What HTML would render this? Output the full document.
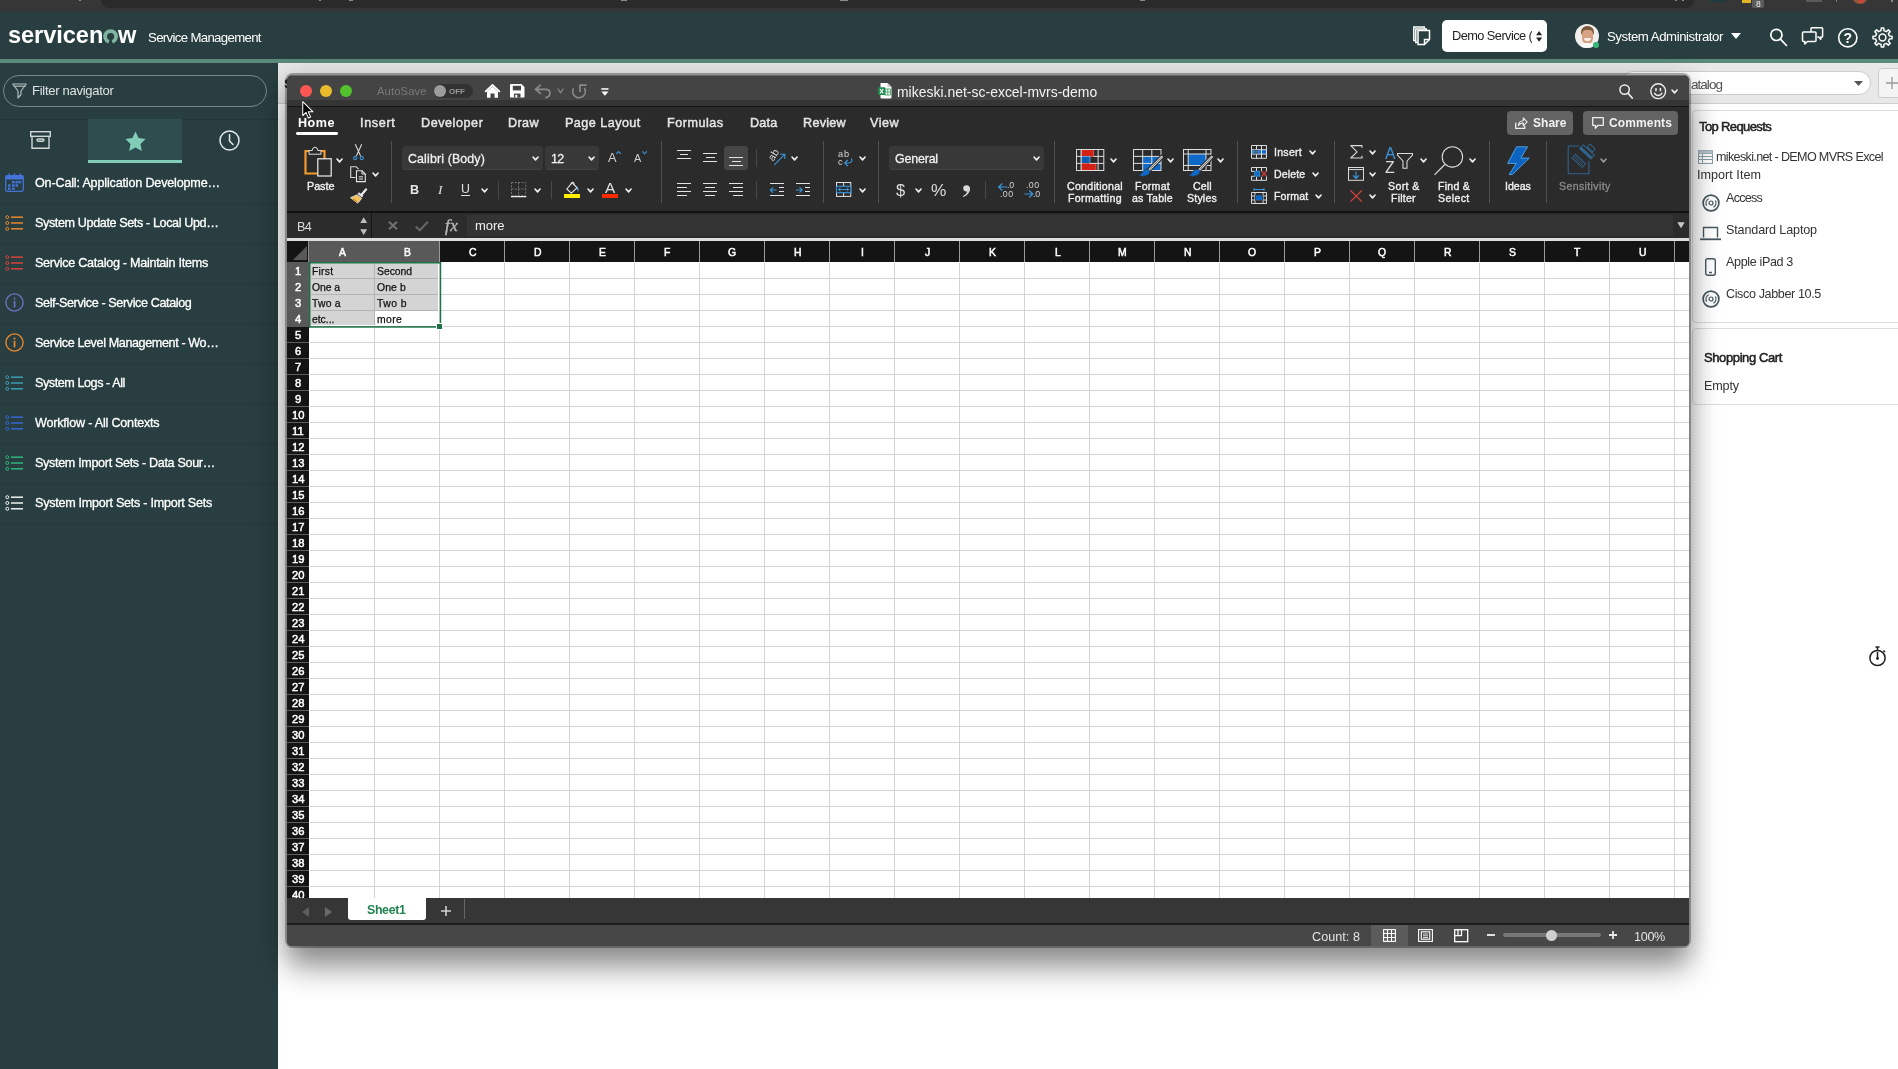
<!DOCTYPE html>
<html><head><meta charset="utf-8"><title>ServiceNow</title>
<style>
html,body{margin:0;padding:0;}
body{width:1898px;height:1069px;overflow:hidden;position:relative;background:#fff;font-family:"Liberation Sans",sans-serif;}
.a{position:absolute;box-sizing:border-box;}
.t{position:absolute;white-space:nowrap;font-family:"Liberation Sans",sans-serif;}
svg{overflow:visible;}
text{font-family:"Liberation Sans",sans-serif;white-space:pre;}
</style></head><body><div id="pg" style="position:absolute;left:0;top:0;width:1898px;height:1069px;will-change:transform;">
<div class="a" style="left:0px;top:0px;width:1898px;height:12.3px;background:#363636;"></div>
<div class="a" style="left:101px;top:-8px;width:1593px;height:16px;background:#2a2a2a;border-radius:8px;"></div>
<div class="a" style="left:79px;top:0px;width:2px;height:1px;background:#8a8a8a;"></div>
<div class="a" style="left:319px;top:0px;width:1.5px;height:1px;background:#8a8a8a;"></div>
<div class="a" style="left:349px;top:0px;width:4px;height:1px;background:#8a8a8a;"></div>
<div class="a" style="left:621px;top:0px;width:6px;height:1px;background:#8a8a8a;"></div>
<div class="a" style="left:840px;top:0px;width:8px;height:1px;background:#8a8a8a;"></div>
<div class="a" style="left:1140px;top:0px;width:5px;height:1px;background:#8a8a8a;"></div>
<div class="a" style="left:1675px;top:0px;width:2px;height:1px;background:#8a8a8a;"></div>
<div class="a" style="left:1682px;top:0px;width:2px;height:1px;background:#8a8a8a;"></div>
<div class="a" style="left:1710px;top:0px;width:16px;height:2px;background:#1d3a40;"></div>
<div class="a" style="left:1742px;top:0px;width:9px;height:2.6px;background:#e6b422;"></div>
<div class="a" style="left:1752px;top:-2px;width:12px;height:9.6px;background:#5c5c5c;border-radius:2px;"></div>
<svg class="a tx" style="left:1755.64px;top:6.60px;" width="1" height="1"><text style="font-size:8.5px;fill:#f0f0f0;">8</text></svg>
<div class="a" style="left:1806px;top:0px;width:16px;height:1.5px;background:#5a5a5a;"></div>
<div class="a" style="left:1836px;top:0px;width:1px;height:2px;background:#777;"></div>
<div class="a" style="left:1852px;top:-12px;width:16px;height:16px;background:#8a5a3a;border-radius:50%;"></div>
<div class="a" style="left:1858px;top:0px;width:6px;height:3px;background:#c9463a;"></div>
<div class="a" style="left:1891px;top:0px;width:2px;height:1.5px;background:#888;"></div>
<div class="a" style="left:0px;top:12px;width:1898px;height:47px;background:#293e40;"></div>
<div class="a" style="left:0px;top:59px;width:1898px;height:4px;background:#5a8a7a;"></div>
<svg class="a tx" style="left:8.00px;top:42.70px;" width="1" height="1"><text style="font-size:23.6px;fill:#fff;letter-spacing:-0.060px;font-weight:bold;">servicen</text></svg>
<svg class="a tx" style="left:118.30px;top:42.70px;" width="1" height="1"><text style="font-size:23.6px;fill:#fff;font-weight:bold;">w</text></svg>
<svg class="a" style="left:103px;top:28.7px;" width="15.2" height="15.2" viewBox="0 0 15.2 15.2"><circle cx="7.600" cy="7.600" r="5.500" fill="none" stroke="#81b5a1" stroke-width="3.800"/><path d="M5.200 15.200l1.300-4.300h2.200l1.300 4.300z" fill="#293e40"/></svg>
<svg class="a tx" style="left:148.00px;top:42.40px;" width="1" height="1"><text style="font-size:13.2px;fill:#fff;letter-spacing:-0.652px;">Service Management</text></svg>
<svg class="a" style="left:1412px;top:25px;" width="19" height="21" viewBox="0 0 19 21"><g fill="none" stroke="#fff" stroke-width="1.5"><path d="M3.5 15.5h-1.7v-13.5h10.5v1.5"/><path d="M5.5 17.5h-1.7v-13.5h10.5v1.5"/><path d="M6 5.5h11.5v9l-5 5h-6.5z" fill="#293e40"/><path d="M17.5 14.5h-5v5" /></g></svg>
<div class="a" style="left:1442px;top:20px;width:105px;height:32px;background:#fff;border-radius:5px;"></div>
<svg class="a tx" style="left:1451.60px;top:40.10px;" width="1" height="1"><text style="font-size:12.8px;fill:#222;letter-spacing:-0.564px;">Demo Service (</text></svg>
<div class="a" style="left:1532.2px;top:24px;width:12px;height:24px;background:#fff;"></div>
<svg class="a" style="left:1536px;top:30.6px;" width="6.2" height="11" viewBox="0 0 6.2 11"><path d="M3.100 0l3 4.300h-6zM3.100 10.800l3-4.300h-6z" fill="#222"/></svg>
<div class="a" style="left:1575px;top:24px;width:24px;height:24px;background:#f2f0ee;border-radius:50%;overflow:hidden;"><div class="a" style="left:6px;top:2px;width:13px;height:9px;background:#7a5a3c;border-radius:6px 6px 2px 2px"></div><div class="a" style="left:7px;top:5.500px;width:11px;height:14px;background:#d6a283;border-radius:4px 4px 5.500px 5.500px"></div><div class="a" style="left:9px;top:14px;width:7px;height:2.500px;background:#f7efe9;border-radius:0 0 3px 3px"></div><div class="a" style="left:1px;top:19px;width:22px;height:10px;background:#fafafa;border-radius:9px 9px 0 0"></div></div>
<div class="a" style="left:1593px;top:42.2px;width:5.8px;height:5.8px;background:#35b577;border-radius:50%;"></div>
<svg class="a tx" style="left:1607.30px;top:40.50px;" width="1" height="1"><text style="font-size:13.2px;fill:#fff;letter-spacing:-0.435px;">System Administrator</text></svg>
<svg class="a" style="left:1731px;top:33px;" width="10" height="6" viewBox="0 0 10 6"><path d="M0 0h10l-5 6z" fill="#fff"/></svg>
<svg class="a" style="left:1769px;top:28px;" width="19" height="19" viewBox="0 0 19 19"><g fill="none" stroke="#fff" stroke-width="1.7"><circle cx="7.400" cy="6.900" r="5.600"/><path d="M11.400 11.200l6.100 6.300" stroke-linecap="round"/></g></svg>
<svg class="a" style="left:1802px;top:26.5px;" width="22" height="18" viewBox="0 0 22 18"><g fill="none" stroke="#fff" stroke-width="1.500" stroke-linejoin="round"><path d="M9 4.800v-3.200q0-0.800 0.800-0.800h10q0.800 0 0.800 0.800v7.600q0 0.800-0.800 0.800h-1v2.300l-2.300-2.300h-1.200"/><path d="M1.500 5.100h11.500q1 0 1 1v7.400q0 1-1 1h-7.500l-2.700 2.500v-2.500h-1.300q-1 0-1-1v-7.400q0-1 1-1z"/></g></svg>
<svg class="a" style="left:1836.5px;top:26.7px;" width="22" height="22" viewBox="0 0 22 22"><circle cx="10.800" cy="10.800" r="9.100" fill="none" stroke="#fff" stroke-width="1.600"/><text x="10.800" y="15.800" style="font-size:14px;font-weight:bold;fill:#fff;" text-anchor="middle">?</text></svg>
<svg class="a" style="left:1871px;top:26px;" width="23" height="23" viewBox="0 0 23 23"><g transform="translate(11.5 11.5)" fill="none" stroke="#fff" stroke-width="1.5" stroke-linejoin="round"><path d="M-1.46 -6.85 L-1.24 -9.52 L1.24 -9.52 L1.46 -6.85 L3.81 -5.87 L5.85 -7.61 L7.61 -5.85 L5.87 -3.81 L6.85 -1.46 L9.52 -1.24 L9.52 1.24 L6.85 1.46 L5.87 3.81 L7.61 5.85 L5.85 7.61 L3.81 5.87 L1.46 6.85 L1.24 9.52 L-1.24 9.52 L-1.46 6.85 L-3.81 5.87 L-5.85 7.61 L-7.61 5.85 L-5.87 3.81 L-6.85 1.46 L-9.52 1.24 L-9.52 -1.24 L-6.85 -1.46 L-5.87 -3.81 L-7.61 -5.85 L-5.85 -7.61 L-3.81 -5.87Z"/><circle r="3.4"/></g></svg>
<div class="a" style="left:0px;top:63px;width:278px;height:1006px;background:#293e40;"></div>
<div class="a" style="left:3px;top:75px;width:264px;height:32px;border:1px solid #728a8b;border-radius:16px;"></div>
<svg class="a" style="left:12px;top:83px;" width="15" height="16" viewBox="0 0 15 16"><g fill="none" stroke="#aebbb9" stroke-width="1.2"><path d="M0.8 1h13.4l-5.2 7v3.5l-3 3.5v-7z" stroke-linejoin="round"/><path d="M1.5 3.2h12"/></g></svg>
<svg class="a tx" style="left:32.40px;top:95.30px;" width="1" height="1"><text style="font-size:13px;fill:#dde4e3;letter-spacing:-0.280px;">Filter navigator</text></svg>
<div class="a" style="left:0px;top:119px;width:278px;height:1px;background:#243739;"></div>
<div class="a" style="left:88px;top:119px;width:94px;height:44px;background:#2f4d4f;"></div>
<div class="a" style="left:88px;top:160px;width:94px;height:3px;background:#81cdb8;"></div>
<svg class="a" style="left:30px;top:131px;" width="21" height="18" viewBox="0 0 21 18"><g fill="none" stroke="#cfd8d7" stroke-width="1.4"><rect x="0.7" y="0.7" width="19.6" height="4.6"/><path d="M2 5.3v12h17v-12"/><rect x="7" y="8" width="7" height="2.2" rx="1.1"/></g></svg>
<svg class="a" style="left:124.5px;top:130.5px;" width="21" height="20" viewBox="0 0 21 20"><path d="M10.5 0.5l3.1 6.6 7 .9-5.1 5 1.3 7.1-6.3-3.5-6.3 3.5 1.3-7.1-5.1-5 7-.9z" fill="#81cdb8"/></svg>
<svg class="a" style="left:219px;top:130px;" width="21" height="21" viewBox="0 0 21 21"><g fill="none" stroke="#e4eae9" stroke-width="1.5"><circle cx="10.5" cy="10.5" r="9.5"/><path d="M10.5 4.5v6.5l3.5 3.5" stroke-linecap="round"/></g></svg>
<div class="a" style="left:0px;top:202.5px;width:278px;height:1px;background:rgba(0,0,0,0.10);"></div>
<svg class="a tx" style="left:35.00px;top:187.10px;" width="1" height="1"><text style="font-size:12.6px;fill:#fff;letter-spacing:-0.177px;stroke:#fff;stroke-width:0.3px;">On-Call: Application Developme…</text></svg>
<svg class="a" style="left:4.5px;top:172.5px;" width="19" height="19" viewBox="0 0 19 19"><rect x="0.7" y="2.7" width="17.6" height="15.6" rx="1.5" fill="none" stroke="#4372d8" stroke-width="1.3"/><rect x="1" y="3" width="17" height="3.5" fill="#4372d8"/><rect x="3.3" y="0.3" width="1.4" height="4" fill="#4372d8"/><rect x="8.8" y="0.3" width="1.4" height="4" fill="#4372d8"/><rect x="14.3" y="0.3" width="1.4" height="4" fill="#4372d8"/><rect x="7" y="8" width="2.6" height="2.4" fill="#4372d8"/><rect x="10.5" y="8" width="2.6" height="2.4" fill="#4372d8"/><rect x="13.5" y="8" width="2.6" height="2.4" fill="#4372d8"/><rect x="3" y="11.3" width="2.6" height="2.4" fill="#4372d8"/><rect x="7" y="11.3" width="2.6" height="2.4" fill="#4372d8"/><rect x="10.5" y="11.3" width="2.6" height="2.4" fill="#4372d8"/><rect x="3" y="14.5" width="2.6" height="2.4" fill="#4372d8"/><rect x="7" y="14.5" width="2.6" height="2.4" fill="#4372d8"/></svg>
<div class="a" style="left:0px;top:242.5px;width:278px;height:1px;background:rgba(0,0,0,0.10);"></div>
<svg class="a tx" style="left:35.00px;top:227.10px;" width="1" height="1"><text style="font-size:12.6px;fill:#fff;letter-spacing:-0.383px;stroke:#fff;stroke-width:0.3px;">System Update Sets - Local Upd…</text></svg>
<svg class="a" style="left:4.5px;top:214.5px;" width="19" height="16" viewBox="0 0 19 16"><circle cx="2.3" cy="2.2" r="1.5" fill="none" stroke="#e8852c" stroke-width="1"/><path d="M6 2.2h12" stroke="#e8852c" stroke-width="1.5"/><circle cx="2.3" cy="8" r="1.5" fill="none" stroke="#e8852c" stroke-width="1"/><path d="M6 8h12" stroke="#e8852c" stroke-width="1.5"/><circle cx="2.3" cy="13.8" r="1.5" fill="none" stroke="#e8852c" stroke-width="1"/><path d="M6 13.8h12" stroke="#e8852c" stroke-width="1.5"/></svg>
<div class="a" style="left:0px;top:282.5px;width:278px;height:1px;background:rgba(0,0,0,0.10);"></div>
<svg class="a tx" style="left:35.00px;top:267.10px;" width="1" height="1"><text style="font-size:12.6px;fill:#fff;letter-spacing:-0.284px;stroke:#fff;stroke-width:0.3px;">Service Catalog - Maintain Items</text></svg>
<svg class="a" style="left:4.5px;top:254.5px;" width="19" height="16" viewBox="0 0 19 16"><circle cx="2.3" cy="2.2" r="1.5" fill="none" stroke="#d9423a" stroke-width="1"/><path d="M6 2.2h12" stroke="#d9423a" stroke-width="1.5"/><circle cx="2.3" cy="8" r="1.5" fill="none" stroke="#d9423a" stroke-width="1"/><path d="M6 8h12" stroke="#d9423a" stroke-width="1.5"/><circle cx="2.3" cy="13.8" r="1.5" fill="none" stroke="#d9423a" stroke-width="1"/><path d="M6 13.8h12" stroke="#d9423a" stroke-width="1.5"/></svg>
<div class="a" style="left:0px;top:322.5px;width:278px;height:1px;background:rgba(0,0,0,0.10);"></div>
<svg class="a tx" style="left:35.00px;top:307.10px;" width="1" height="1"><text style="font-size:12.6px;fill:#fff;letter-spacing:-0.385px;stroke:#fff;stroke-width:0.3px;">Self-Service - Service Catalog</text></svg>
<svg class="a" style="left:4.5px;top:293px;" width="19" height="19" viewBox="0 0 19 19"><circle cx="9.5" cy="9.5" r="8.6" fill="none" stroke="#7272c4" stroke-width="1.3"/><rect x="8.7" y="7.8" width="1.7" height="6.6" fill="#7272c4"/><rect x="8.7" y="4.6" width="1.7" height="1.8" fill="#7272c4"/></svg>
<div class="a" style="left:0px;top:362.5px;width:278px;height:1px;background:rgba(0,0,0,0.10);"></div>
<svg class="a tx" style="left:35.00px;top:347.10px;" width="1" height="1"><text style="font-size:12.6px;fill:#fff;letter-spacing:-0.388px;stroke:#fff;stroke-width:0.3px;">Service Level Management - Wo…</text></svg>
<svg class="a" style="left:4.5px;top:333px;" width="19" height="19" viewBox="0 0 19 19"><circle cx="9.5" cy="9.5" r="8.6" fill="none" stroke="#f08a2a" stroke-width="1.3"/><rect x="8.7" y="7.8" width="1.7" height="6.6" fill="#f08a2a"/><rect x="8.7" y="4.6" width="1.7" height="1.8" fill="#f08a2a"/></svg>
<div class="a" style="left:0px;top:402.5px;width:278px;height:1px;background:rgba(0,0,0,0.10);"></div>
<svg class="a tx" style="left:35.00px;top:387.10px;" width="1" height="1"><text style="font-size:12.6px;fill:#fff;letter-spacing:-0.432px;stroke:#fff;stroke-width:0.3px;">System Logs - All</text></svg>
<svg class="a" style="left:4.5px;top:374.5px;" width="19" height="16" viewBox="0 0 19 16"><circle cx="2.3" cy="2.2" r="1.5" fill="none" stroke="#3d9db5" stroke-width="1"/><path d="M6 2.2h12" stroke="#3d9db5" stroke-width="1.5"/><circle cx="2.3" cy="8" r="1.5" fill="none" stroke="#3d9db5" stroke-width="1"/><path d="M6 8h12" stroke="#3d9db5" stroke-width="1.5"/><circle cx="2.3" cy="13.8" r="1.5" fill="none" stroke="#3d9db5" stroke-width="1"/><path d="M6 13.8h12" stroke="#3d9db5" stroke-width="1.5"/></svg>
<div class="a" style="left:0px;top:442.5px;width:278px;height:1px;background:rgba(0,0,0,0.10);"></div>
<svg class="a tx" style="left:35.00px;top:427.10px;" width="1" height="1"><text style="font-size:12.6px;fill:#fff;letter-spacing:-0.209px;stroke:#fff;stroke-width:0.3px;">Workflow - All Contexts</text></svg>
<svg class="a" style="left:4.5px;top:414.5px;" width="19" height="16" viewBox="0 0 19 16"><circle cx="2.3" cy="2.2" r="1.5" fill="none" stroke="#3767d6" stroke-width="1"/><path d="M6 2.2h12" stroke="#3767d6" stroke-width="1.5"/><circle cx="2.3" cy="8" r="1.5" fill="none" stroke="#3767d6" stroke-width="1"/><path d="M6 8h12" stroke="#3767d6" stroke-width="1.5"/><circle cx="2.3" cy="13.8" r="1.5" fill="none" stroke="#3767d6" stroke-width="1"/><path d="M6 13.8h12" stroke="#3767d6" stroke-width="1.5"/></svg>
<div class="a" style="left:0px;top:482.5px;width:278px;height:1px;background:rgba(0,0,0,0.10);"></div>
<svg class="a tx" style="left:35.00px;top:467.10px;" width="1" height="1"><text style="font-size:12.6px;fill:#fff;letter-spacing:-0.337px;stroke:#fff;stroke-width:0.3px;">System Import Sets - Data Sour…</text></svg>
<svg class="a" style="left:4.5px;top:454.5px;" width="19" height="16" viewBox="0 0 19 16"><circle cx="2.3" cy="2.2" r="1.5" fill="none" stroke="#2db77b" stroke-width="1"/><path d="M6 2.2h12" stroke="#2db77b" stroke-width="1.5"/><circle cx="2.3" cy="8" r="1.5" fill="none" stroke="#2db77b" stroke-width="1"/><path d="M6 8h12" stroke="#2db77b" stroke-width="1.5"/><circle cx="2.3" cy="13.8" r="1.5" fill="none" stroke="#2db77b" stroke-width="1"/><path d="M6 13.8h12" stroke="#2db77b" stroke-width="1.5"/></svg>
<div class="a" style="left:0px;top:522.5px;width:278px;height:1px;background:rgba(0,0,0,0.10);"></div>
<svg class="a tx" style="left:35.00px;top:507.10px;" width="1" height="1"><text style="font-size:12.6px;fill:#fff;letter-spacing:-0.267px;stroke:#fff;stroke-width:0.3px;">System Import Sets - Import Sets</text></svg>
<svg class="a" style="left:4.5px;top:494.5px;" width="19" height="16" viewBox="0 0 19 16"><circle cx="2.3" cy="2.2" r="1.5" fill="none" stroke="#f2f2f2" stroke-width="1"/><path d="M6 2.2h12" stroke="#f2f2f2" stroke-width="1.5"/><circle cx="2.3" cy="8" r="1.5" fill="none" stroke="#f2f2f2" stroke-width="1"/><path d="M6 8h12" stroke="#f2f2f2" stroke-width="1.5"/><circle cx="2.3" cy="13.8" r="1.5" fill="none" stroke="#f2f2f2" stroke-width="1"/><path d="M6 13.8h12" stroke="#f2f2f2" stroke-width="1.5"/></svg>
<div class="a" style="left:278px;top:63px;width:1620px;height:41px;background:#e8e8e8;"></div>
<div class="a" style="left:278px;top:103px;width:1620px;height:1px;background:#cfcfcf;"></div>
<div class="a" style="left:1621px;top:71px;width:250px;height:24px;background:#fff;border:1px solid #ccc;border-radius:12px;"></div>
<svg class="a tx" style="left:1691.00px;top:88.50px;" width="1" height="1"><text style="font-size:13.5px;fill:#555;letter-spacing:-0.964px;">atalog</text></svg>
<svg class="a" style="left:1854px;top:81px;" width="9" height="5" viewBox="0 0 9 5"><path d="M0 0h9l-4.5 5z" fill="#555"/></svg>
<div class="a" style="left:1878px;top:68px;width:30px;height:30px;background:#f4f4f4;border:1px solid #ccc;border-radius:4px;"></div>
<svg class="a" style="left:1886px;top:77px;" width="12" height="12" viewBox="0 0 12 12"><path d="M6 0v12M0 6h12" stroke="#999" stroke-width="1.3"/></svg>
<div class="a" style="left:1692px;top:110px;width:220px;height:213px;background:#fff;border:1px solid #ddd;border-radius:4px;"></div>
<svg class="a tx" style="left:1699.00px;top:131.00px;" width="1" height="1"><text style="font-size:13px;fill:#222;letter-spacing:-0.624px;stroke:#222;stroke-width:0.5px;">Top Requests</text></svg>
<svg class="a" style="left:1698px;top:150px;" width="15" height="14" viewBox="0 0 15 14"><g fill="none" stroke="#8aa0a8" stroke-width="1"><rect x="0.5" y="0.5" width="14" height="13"/><path d="M0.5 3.5h14M0.5 6.5h14M0.5 9.5h14M4.5 3.5v10"/></g><rect x="0.5" y="0.5" width="14" height="3" fill="#b7c6cc"/></svg>
<svg class="a tx" style="left:1716.00px;top:161.30px;" width="1" height="1"><text style="font-size:12.6px;fill:#333;letter-spacing:-0.663px;">mikeski.net - DEMO MVRS Excel</text></svg>
<svg class="a tx" style="left:1697.00px;top:179.00px;" width="1" height="1"><text style="font-size:12.6px;fill:#333;letter-spacing:0.026px;">Import Item</text></svg>
<svg class="a" style="left:1701.5px;top:194px;" width="18" height="18" viewBox="0 0 18 18"><g fill="none" stroke="#46585e"><circle cx="9" cy="9" r="7.9" stroke-width="1.7"/><circle cx="9" cy="9" r="2" stroke-width="1.2"/><path d="M4.6 11.5a5 5 0 0 1 2-6.7M13.4 6.5a5 5 0 0 1-2 6.7" stroke-width="1.3"/></g></svg>
<svg class="a tx" style="left:1726.00px;top:202.00px;" width="1" height="1"><text style="font-size:12.6px;fill:#333;letter-spacing:-0.769px;">Access</text></svg>
<svg class="a" style="left:1700px;top:224px;" width="21" height="18" viewBox="0 0 21 18"><g fill="none" stroke="#46585e" stroke-width="1.4"><path d="M3.5 13.5v-10h14v10"/><path d="M0 15.3h21" stroke-width="1.8"/></g></svg>
<svg class="a tx" style="left:1726.00px;top:234.00px;" width="1" height="1"><text style="font-size:12.6px;fill:#333;letter-spacing:-0.145px;">Standard Laptop</text></svg>
<svg class="a" style="left:1704.5px;top:258px;" width="11" height="18" viewBox="0 0 11 18"><g fill="none" stroke="#46585e" stroke-width="1.4"><rect x="0.7" y="0.7" width="9.6" height="16.6" rx="2"/><path d="M4 14.5h3"/></g></svg>
<svg class="a tx" style="left:1726.00px;top:266.00px;" width="1" height="1"><text style="font-size:12.6px;fill:#333;letter-spacing:-0.371px;">Apple iPad 3</text></svg>
<svg class="a" style="left:1701.5px;top:290px;" width="18" height="18" viewBox="0 0 18 18"><g fill="none" stroke="#46585e"><circle cx="9" cy="9" r="7.9" stroke-width="1.7"/><circle cx="9" cy="9" r="2" stroke-width="1.2"/><path d="M4.6 11.5a5 5 0 0 1 2-6.7M13.4 6.5a5 5 0 0 1-2 6.7" stroke-width="1.3"/></g></svg>
<svg class="a tx" style="left:1726.00px;top:298.00px;" width="1" height="1"><text style="font-size:12.6px;fill:#333;letter-spacing:-0.386px;">Cisco Jabber 10.5</text></svg>
<div class="a" style="left:1692px;top:328px;width:220px;height:77px;background:#fff;border:1px solid #ddd;border-radius:4px;"></div>
<svg class="a tx" style="left:1704.00px;top:362.00px;" width="1" height="1"><text style="font-size:13px;fill:#222;letter-spacing:-0.393px;stroke:#222;stroke-width:0.5px;">Shopping Cart</text></svg>
<svg class="a tx" style="left:1704.00px;top:390.00px;" width="1" height="1"><text style="font-size:12.6px;fill:#333;letter-spacing:-0.142px;">Empty</text></svg>
<svg class="a" style="left:1868px;top:646px;" width="19" height="21" viewBox="0 0 19 21"><g fill="none" stroke="#222" stroke-width="1.5"><circle cx="9.5" cy="12" r="7.6"/><path d="M9.5 6.5v6" stroke-linecap="round"/><path d="M9.5 1v3M7.5 1h4M15.5 4.5l1.5 1.5"/></g><circle cx="9.5" cy="12.5" r="1.4" fill="#222"/></svg>
<svg class="a tx" style="left:284.30px;top:88.20px;" width="1" height="1"><text style="font-size:13px;fill:#222;font-weight:bold;">S</text></svg>
<div class="a" style="left:287.3px;top:74.6px;width:1401.3px;height:871.8px;background:#444;border-radius:6px;box-shadow:0 22px 30px 0 rgba(0,0,0,0.4),0 3px 26px 3px rgba(0,0,0,0.15),0 0 0 2px rgba(0,0,0,0.3);"></div>
<div class="a" id="xl" style="left:287.3px;top:74.6px;width:1401.3px;height:871.8px;border-radius:6px 6px 5px 5px;overflow:hidden;background:#2b2b2b;">
<div class="a" style="left:-287.3px;top:-74.6px;width:1898px;height:1069px;">
<div class="a" style="left:287.3px;top:74.6px;width:1401.3px;height:26px;background:#444;"></div>
<div class="a" style="left:287.3px;top:74.6px;width:1401.3px;height:1px;background:#6a6a6a;"></div>
<div class="a" style="left:287.3px;top:100px;width:1401.3px;height:6px;background:#353535;"></div>
<div class="a" style="left:287.3px;top:106px;width:1401.3px;height:1.2px;background:#161616;"></div>
<div class="a" style="left:287.3px;top:107px;width:1401.3px;height:104.5px;background:#2b2b2b;"></div>
<div class="a" style="left:287.3px;top:211.2px;width:1401.3px;height:1.6px;background:#121212;"></div>
<div class="a" style="left:287.3px;top:212.8px;width:1401.3px;height:25.5px;background:#2c2c2c;"></div>
<div class="a" style="left:299.8px;top:84.8px;width:12.4px;height:12.4px;background:#fc5753;border-radius:50%;"></div>
<div class="a" style="left:319.8px;top:84.8px;width:12.4px;height:12.4px;background:#e8bb2a;border-radius:50%;"></div>
<div class="a" style="left:339.8px;top:84.8px;width:12.4px;height:12.4px;background:#54c22c;border-radius:50%;"></div>
<div class="a" style="left:371px;top:212.8px;width:1.2px;height:25.5px;background:#151515;"></div>
<div class="a" style="left:467.3px;top:215px;width:1206px;height:20.5px;background:#343434;"></div>
<svg class="a tx" style="left:297.40px;top:230.50px;" width="1" height="1"><text style="font-size:12.6px;fill:#dcdcdc;letter-spacing:-0.706px;">B4</text></svg>
<svg class="a" style="left:360px;top:216.5px;" width="7.4" height="18.5" viewBox="0 0 7.4 18.5"><path d="M3.7 0.3l3.5 5.8h-7zM3.7 18l3.5-5.8h-7z" fill="#bdbdbd"/></svg>
<svg class="a" style="left:387.5px;top:221.2px;" width="10" height="9" viewBox="0 0 10 9"><path d="M1 0.8l8 7.4M9 0.8l-8 7.4" stroke="#707070" stroke-width="2.1" fill="none"/></svg>
<svg class="a" style="left:415px;top:220.5px;" width="14" height="10" viewBox="0 0 14 10"><path d="M0.8 5.5l4 3.7l8.2-8.4" stroke="#666" stroke-width="2.2" fill="none"/></svg>
<svg class="a tx" style="left:445.00px;top:231.00px;" width="1" height="1"><text style="font-size:17px;fill:#b8b8b8;letter-spacing:0.616px;font-style:italic;font-family:'Liberation Serif',serif;stroke:#b8b8b8;stroke-width:0.4px;">fx</text></svg>
<svg class="a tx" style="left:475.00px;top:230.00px;" width="1" height="1"><text style="font-size:13px;fill:#f0f0f0;letter-spacing:-0.030px;">more</text></svg>
<svg class="a" style="left:1677px;top:221.5px;" width="9" height="7" viewBox="0 0 9 7"><path d="M0.3 0.3h7.4l-3.7 6z" fill="#c8c8c8"/></svg>
<div class="a" style="left:287.3px;top:238.3px;width:1401.3px;height:2.7px;background:#dedede;"></div>
<div class="a" style="left:287.3px;top:241px;width:1401.3px;height:657px;background:#fff;"></div>
<div class="a" style="left:310px;top:263px;width:1378.6px;height:635px;background-image:linear-gradient(to right,transparent 64px,#d4d4d4 64px),linear-gradient(to bottom,transparent 15px,#d4d4d4 15px);background-size:65px 16px,65px 16px;background-position:0 0,0 0;"></div>
<div class="a" style="left:287.3px;top:241px;width:1401.3px;height:20.6px;background:#141414;"></div>
<div class="a" style="left:287.3px;top:241px;width:22px;height:657px;background:#141414;"></div>
<div class="a" style="left:309px;top:241px;width:131px;height:20.6px;background:#595959;"></div>
<div class="a" style="left:287.3px;top:261.5px;width:22px;height:65px;background:#595959;"></div>
<svg class="a" style="left:293px;top:246px;" width="14" height="14" viewBox="0 0 14 14"><path d="M14 0v14h-14z" fill="#585858"/></svg>
<div class="a" style="left:308.3px;top:241px;width:1px;height:20.6px;background:#8a8a8a;"></div>
<svg class="a tx" style="left:338.93px;top:255.80px;" width="1" height="1"><text style="font-size:10.4px;fill:#fff;stroke:#fff;stroke-width:0.5px;">A</text></svg>
<svg class="a tx" style="left:403.93px;top:255.80px;" width="1" height="1"><text style="font-size:10.4px;fill:#fff;stroke:#fff;stroke-width:0.5px;">B</text></svg>
<svg class="a tx" style="left:468.64px;top:255.80px;" width="1" height="1"><text style="font-size:10.4px;fill:#fff;stroke:#fff;stroke-width:0.5px;">C</text></svg>
<div class="a" style="left:438.5px;top:241px;width:1px;height:20.6px;background:#9a9a9a;"></div>
<svg class="a tx" style="left:533.64px;top:255.80px;" width="1" height="1"><text style="font-size:10.4px;fill:#fff;stroke:#fff;stroke-width:0.5px;">D</text></svg>
<div class="a" style="left:503.5px;top:241px;width:1px;height:20.6px;background:#9a9a9a;"></div>
<svg class="a tx" style="left:598.93px;top:255.80px;" width="1" height="1"><text style="font-size:10.4px;fill:#fff;stroke:#fff;stroke-width:0.5px;">E</text></svg>
<div class="a" style="left:568.5px;top:241px;width:1px;height:20.6px;background:#9a9a9a;"></div>
<svg class="a tx" style="left:664.22px;top:255.80px;" width="1" height="1"><text style="font-size:10.4px;fill:#fff;stroke:#fff;stroke-width:0.5px;">F</text></svg>
<div class="a" style="left:633.5px;top:241px;width:1px;height:20.6px;background:#9a9a9a;"></div>
<svg class="a tx" style="left:728.36px;top:255.80px;" width="1" height="1"><text style="font-size:10.4px;fill:#fff;stroke:#fff;stroke-width:0.5px;">G</text></svg>
<div class="a" style="left:698.5px;top:241px;width:1px;height:20.6px;background:#9a9a9a;"></div>
<svg class="a tx" style="left:793.64px;top:255.80px;" width="1" height="1"><text style="font-size:10.4px;fill:#fff;stroke:#fff;stroke-width:0.5px;">H</text></svg>
<div class="a" style="left:763.5px;top:241px;width:1px;height:20.6px;background:#9a9a9a;"></div>
<svg class="a tx" style="left:860.96px;top:255.80px;" width="1" height="1"><text style="font-size:10.4px;fill:#fff;stroke:#fff;stroke-width:0.5px;">I</text></svg>
<div class="a" style="left:828.5px;top:241px;width:1px;height:20.6px;background:#9a9a9a;"></div>
<svg class="a tx" style="left:924.80px;top:255.80px;" width="1" height="1"><text style="font-size:10.4px;fill:#fff;stroke:#fff;stroke-width:0.5px;">J</text></svg>
<div class="a" style="left:893.5px;top:241px;width:1px;height:20.6px;background:#9a9a9a;"></div>
<svg class="a tx" style="left:988.93px;top:255.80px;" width="1" height="1"><text style="font-size:10.4px;fill:#fff;stroke:#fff;stroke-width:0.5px;">K</text></svg>
<div class="a" style="left:958.5px;top:241px;width:1px;height:20.6px;background:#9a9a9a;"></div>
<svg class="a tx" style="left:1054.51px;top:255.80px;" width="1" height="1"><text style="font-size:10.4px;fill:#fff;stroke:#fff;stroke-width:0.5px;">L</text></svg>
<div class="a" style="left:1023.5px;top:241px;width:1px;height:20.6px;background:#9a9a9a;"></div>
<svg class="a tx" style="left:1118.07px;top:255.80px;" width="1" height="1"><text style="font-size:10.4px;fill:#fff;stroke:#fff;stroke-width:0.5px;">M</text></svg>
<div class="a" style="left:1088.5px;top:241px;width:1px;height:20.6px;background:#9a9a9a;"></div>
<svg class="a tx" style="left:1183.64px;top:255.80px;" width="1" height="1"><text style="font-size:10.4px;fill:#fff;stroke:#fff;stroke-width:0.5px;">N</text></svg>
<div class="a" style="left:1153.5px;top:241px;width:1px;height:20.6px;background:#9a9a9a;"></div>
<svg class="a tx" style="left:1248.36px;top:255.80px;" width="1" height="1"><text style="font-size:10.4px;fill:#fff;stroke:#fff;stroke-width:0.5px;">O</text></svg>
<div class="a" style="left:1218.5px;top:241px;width:1px;height:20.6px;background:#9a9a9a;"></div>
<svg class="a tx" style="left:1313.93px;top:255.80px;" width="1" height="1"><text style="font-size:10.4px;fill:#fff;stroke:#fff;stroke-width:0.5px;">P</text></svg>
<div class="a" style="left:1283.5px;top:241px;width:1px;height:20.6px;background:#9a9a9a;"></div>
<svg class="a tx" style="left:1378.36px;top:255.80px;" width="1" height="1"><text style="font-size:10.4px;fill:#fff;stroke:#fff;stroke-width:0.5px;">Q</text></svg>
<div class="a" style="left:1348.5px;top:241px;width:1px;height:20.6px;background:#9a9a9a;"></div>
<svg class="a tx" style="left:1443.64px;top:255.80px;" width="1" height="1"><text style="font-size:10.4px;fill:#fff;stroke:#fff;stroke-width:0.5px;">R</text></svg>
<div class="a" style="left:1413.5px;top:241px;width:1px;height:20.6px;background:#9a9a9a;"></div>
<svg class="a tx" style="left:1508.93px;top:255.80px;" width="1" height="1"><text style="font-size:10.4px;fill:#fff;stroke:#fff;stroke-width:0.5px;">S</text></svg>
<div class="a" style="left:1478.5px;top:241px;width:1px;height:20.6px;background:#9a9a9a;"></div>
<svg class="a tx" style="left:1574.22px;top:255.80px;" width="1" height="1"><text style="font-size:10.4px;fill:#fff;stroke:#fff;stroke-width:0.5px;">T</text></svg>
<div class="a" style="left:1543.5px;top:241px;width:1px;height:20.6px;background:#9a9a9a;"></div>
<svg class="a tx" style="left:1638.64px;top:255.80px;" width="1" height="1"><text style="font-size:10.4px;fill:#fff;stroke:#fff;stroke-width:0.5px;">U</text></svg>
<div class="a" style="left:1608.5px;top:241px;width:1px;height:20.6px;background:#9a9a9a;"></div>
<div class="a" style="left:1673.5px;top:241px;width:1px;height:20.6px;background:#9a9a9a;"></div>
<svg class="a tx" style="left:295.09px;top:274.90px;" width="1" height="1"><text style="font-size:11.2px;fill:#fff;stroke:#fff;stroke-width:0.5px;">1</text></svg>
<svg class="a tx" style="left:295.09px;top:290.90px;" width="1" height="1"><text style="font-size:11.2px;fill:#fff;stroke:#fff;stroke-width:0.5px;">2</text></svg>
<svg class="a tx" style="left:295.09px;top:306.90px;" width="1" height="1"><text style="font-size:11.2px;fill:#fff;stroke:#fff;stroke-width:0.5px;">3</text></svg>
<svg class="a tx" style="left:295.09px;top:322.90px;" width="1" height="1"><text style="font-size:11.2px;fill:#fff;stroke:#fff;stroke-width:0.5px;">4</text></svg>
<svg class="a tx" style="left:295.09px;top:338.90px;" width="1" height="1"><text style="font-size:11.2px;fill:#fff;stroke:#fff;stroke-width:0.5px;">5</text></svg>
<div class="a" style="left:287.3px;top:342px;width:22px;height:1px;background:#5e5e5e;"></div>
<svg class="a tx" style="left:295.09px;top:354.90px;" width="1" height="1"><text style="font-size:11.2px;fill:#fff;stroke:#fff;stroke-width:0.5px;">6</text></svg>
<div class="a" style="left:287.3px;top:358px;width:22px;height:1px;background:#5e5e5e;"></div>
<svg class="a tx" style="left:295.09px;top:370.90px;" width="1" height="1"><text style="font-size:11.2px;fill:#fff;stroke:#fff;stroke-width:0.5px;">7</text></svg>
<div class="a" style="left:287.3px;top:374px;width:22px;height:1px;background:#5e5e5e;"></div>
<svg class="a tx" style="left:295.09px;top:386.90px;" width="1" height="1"><text style="font-size:11.2px;fill:#fff;stroke:#fff;stroke-width:0.5px;">8</text></svg>
<div class="a" style="left:287.3px;top:390px;width:22px;height:1px;background:#5e5e5e;"></div>
<svg class="a tx" style="left:295.09px;top:402.90px;" width="1" height="1"><text style="font-size:11.2px;fill:#fff;stroke:#fff;stroke-width:0.5px;">9</text></svg>
<div class="a" style="left:287.3px;top:406px;width:22px;height:1px;background:#5e5e5e;"></div>
<svg class="a tx" style="left:291.97px;top:418.90px;" width="1" height="1"><text style="font-size:11.2px;fill:#fff;stroke:#fff;stroke-width:0.5px;">10</text></svg>
<div class="a" style="left:287.3px;top:422px;width:22px;height:1px;background:#5e5e5e;"></div>
<svg class="a tx" style="left:292.39px;top:434.90px;" width="1" height="1"><text style="font-size:11.2px;fill:#fff;stroke:#fff;stroke-width:0.5px;">11</text></svg>
<div class="a" style="left:287.3px;top:438px;width:22px;height:1px;background:#5e5e5e;"></div>
<svg class="a tx" style="left:291.97px;top:450.90px;" width="1" height="1"><text style="font-size:11.2px;fill:#fff;stroke:#fff;stroke-width:0.5px;">12</text></svg>
<div class="a" style="left:287.3px;top:454px;width:22px;height:1px;background:#5e5e5e;"></div>
<svg class="a tx" style="left:291.97px;top:466.90px;" width="1" height="1"><text style="font-size:11.2px;fill:#fff;stroke:#fff;stroke-width:0.5px;">13</text></svg>
<div class="a" style="left:287.3px;top:470px;width:22px;height:1px;background:#5e5e5e;"></div>
<svg class="a tx" style="left:291.97px;top:482.90px;" width="1" height="1"><text style="font-size:11.2px;fill:#fff;stroke:#fff;stroke-width:0.5px;">14</text></svg>
<div class="a" style="left:287.3px;top:486px;width:22px;height:1px;background:#5e5e5e;"></div>
<svg class="a tx" style="left:291.97px;top:498.90px;" width="1" height="1"><text style="font-size:11.2px;fill:#fff;stroke:#fff;stroke-width:0.5px;">15</text></svg>
<div class="a" style="left:287.3px;top:502px;width:22px;height:1px;background:#5e5e5e;"></div>
<svg class="a tx" style="left:291.97px;top:514.90px;" width="1" height="1"><text style="font-size:11.2px;fill:#fff;stroke:#fff;stroke-width:0.5px;">16</text></svg>
<div class="a" style="left:287.3px;top:518px;width:22px;height:1px;background:#5e5e5e;"></div>
<svg class="a tx" style="left:291.97px;top:530.90px;" width="1" height="1"><text style="font-size:11.2px;fill:#fff;stroke:#fff;stroke-width:0.5px;">17</text></svg>
<div class="a" style="left:287.3px;top:534px;width:22px;height:1px;background:#5e5e5e;"></div>
<svg class="a tx" style="left:291.97px;top:546.90px;" width="1" height="1"><text style="font-size:11.2px;fill:#fff;stroke:#fff;stroke-width:0.5px;">18</text></svg>
<div class="a" style="left:287.3px;top:550px;width:22px;height:1px;background:#5e5e5e;"></div>
<svg class="a tx" style="left:291.97px;top:562.90px;" width="1" height="1"><text style="font-size:11.2px;fill:#fff;stroke:#fff;stroke-width:0.5px;">19</text></svg>
<div class="a" style="left:287.3px;top:566px;width:22px;height:1px;background:#5e5e5e;"></div>
<svg class="a tx" style="left:291.97px;top:578.90px;" width="1" height="1"><text style="font-size:11.2px;fill:#fff;stroke:#fff;stroke-width:0.5px;">20</text></svg>
<div class="a" style="left:287.3px;top:582px;width:22px;height:1px;background:#5e5e5e;"></div>
<svg class="a tx" style="left:291.97px;top:594.90px;" width="1" height="1"><text style="font-size:11.2px;fill:#fff;stroke:#fff;stroke-width:0.5px;">21</text></svg>
<div class="a" style="left:287.3px;top:598px;width:22px;height:1px;background:#5e5e5e;"></div>
<svg class="a tx" style="left:291.97px;top:610.90px;" width="1" height="1"><text style="font-size:11.2px;fill:#fff;stroke:#fff;stroke-width:0.5px;">22</text></svg>
<div class="a" style="left:287.3px;top:614px;width:22px;height:1px;background:#5e5e5e;"></div>
<svg class="a tx" style="left:291.97px;top:626.90px;" width="1" height="1"><text style="font-size:11.2px;fill:#fff;stroke:#fff;stroke-width:0.5px;">23</text></svg>
<div class="a" style="left:287.3px;top:630px;width:22px;height:1px;background:#5e5e5e;"></div>
<svg class="a tx" style="left:291.97px;top:642.90px;" width="1" height="1"><text style="font-size:11.2px;fill:#fff;stroke:#fff;stroke-width:0.5px;">24</text></svg>
<div class="a" style="left:287.3px;top:646px;width:22px;height:1px;background:#5e5e5e;"></div>
<svg class="a tx" style="left:291.97px;top:658.90px;" width="1" height="1"><text style="font-size:11.2px;fill:#fff;stroke:#fff;stroke-width:0.5px;">25</text></svg>
<div class="a" style="left:287.3px;top:662px;width:22px;height:1px;background:#5e5e5e;"></div>
<svg class="a tx" style="left:291.97px;top:674.90px;" width="1" height="1"><text style="font-size:11.2px;fill:#fff;stroke:#fff;stroke-width:0.5px;">26</text></svg>
<div class="a" style="left:287.3px;top:678px;width:22px;height:1px;background:#5e5e5e;"></div>
<svg class="a tx" style="left:291.97px;top:690.90px;" width="1" height="1"><text style="font-size:11.2px;fill:#fff;stroke:#fff;stroke-width:0.5px;">27</text></svg>
<div class="a" style="left:287.3px;top:694px;width:22px;height:1px;background:#5e5e5e;"></div>
<svg class="a tx" style="left:291.97px;top:706.90px;" width="1" height="1"><text style="font-size:11.2px;fill:#fff;stroke:#fff;stroke-width:0.5px;">28</text></svg>
<div class="a" style="left:287.3px;top:710px;width:22px;height:1px;background:#5e5e5e;"></div>
<svg class="a tx" style="left:291.97px;top:722.90px;" width="1" height="1"><text style="font-size:11.2px;fill:#fff;stroke:#fff;stroke-width:0.5px;">29</text></svg>
<div class="a" style="left:287.3px;top:726px;width:22px;height:1px;background:#5e5e5e;"></div>
<svg class="a tx" style="left:291.97px;top:738.90px;" width="1" height="1"><text style="font-size:11.2px;fill:#fff;stroke:#fff;stroke-width:0.5px;">30</text></svg>
<div class="a" style="left:287.3px;top:742px;width:22px;height:1px;background:#5e5e5e;"></div>
<svg class="a tx" style="left:291.97px;top:754.90px;" width="1" height="1"><text style="font-size:11.2px;fill:#fff;stroke:#fff;stroke-width:0.5px;">31</text></svg>
<div class="a" style="left:287.3px;top:758px;width:22px;height:1px;background:#5e5e5e;"></div>
<svg class="a tx" style="left:291.97px;top:770.90px;" width="1" height="1"><text style="font-size:11.2px;fill:#fff;stroke:#fff;stroke-width:0.5px;">32</text></svg>
<div class="a" style="left:287.3px;top:774px;width:22px;height:1px;background:#5e5e5e;"></div>
<svg class="a tx" style="left:291.97px;top:786.90px;" width="1" height="1"><text style="font-size:11.2px;fill:#fff;stroke:#fff;stroke-width:0.5px;">33</text></svg>
<div class="a" style="left:287.3px;top:790px;width:22px;height:1px;background:#5e5e5e;"></div>
<svg class="a tx" style="left:291.97px;top:802.90px;" width="1" height="1"><text style="font-size:11.2px;fill:#fff;stroke:#fff;stroke-width:0.5px;">34</text></svg>
<div class="a" style="left:287.3px;top:806px;width:22px;height:1px;background:#5e5e5e;"></div>
<svg class="a tx" style="left:291.97px;top:818.90px;" width="1" height="1"><text style="font-size:11.2px;fill:#fff;stroke:#fff;stroke-width:0.5px;">35</text></svg>
<div class="a" style="left:287.3px;top:822px;width:22px;height:1px;background:#5e5e5e;"></div>
<svg class="a tx" style="left:291.97px;top:834.90px;" width="1" height="1"><text style="font-size:11.2px;fill:#fff;stroke:#fff;stroke-width:0.5px;">36</text></svg>
<div class="a" style="left:287.3px;top:838px;width:22px;height:1px;background:#5e5e5e;"></div>
<svg class="a tx" style="left:291.97px;top:850.90px;" width="1" height="1"><text style="font-size:11.2px;fill:#fff;stroke:#fff;stroke-width:0.5px;">37</text></svg>
<div class="a" style="left:287.3px;top:854px;width:22px;height:1px;background:#5e5e5e;"></div>
<svg class="a tx" style="left:291.97px;top:866.90px;" width="1" height="1"><text style="font-size:11.2px;fill:#fff;stroke:#fff;stroke-width:0.5px;">38</text></svg>
<div class="a" style="left:287.3px;top:870px;width:22px;height:1px;background:#5e5e5e;"></div>
<svg class="a tx" style="left:291.97px;top:882.90px;" width="1" height="1"><text style="font-size:11.2px;fill:#fff;stroke:#fff;stroke-width:0.5px;">39</text></svg>
<div class="a" style="left:287.3px;top:886px;width:22px;height:1px;background:#5e5e5e;"></div>
<svg class="a tx" style="left:291.97px;top:898.90px;" width="1" height="1"><text style="font-size:11.2px;fill:#fff;stroke:#fff;stroke-width:0.5px;">40</text></svg>
<div class="a" style="left:287.3px;top:902px;width:22px;height:1px;background:#5e5e5e;"></div>
<div class="a" style="left:309px;top:261.5px;width:132px;height:66px;background:#fff;"></div>
<div class="a" style="left:311.2px;top:264px;width:127.2px;height:61px;background:#d4d4d4;"></div>
<div class="a" style="left:375px;top:311px;width:63.4px;height:14px;background:#fff;"></div>
<div class="a" style="left:311.2px;top:278px;width:127.2px;height:1px;background:#b4b4b4;"></div>
<div class="a" style="left:311.2px;top:294px;width:127.2px;height:1px;background:#b4b4b4;"></div>
<div class="a" style="left:311.2px;top:310px;width:127.2px;height:1px;background:#b4b4b4;"></div>
<div class="a" style="left:374px;top:264px;width:1px;height:61px;background:#b4b4b4;"></div>
<svg class="a tx" style="left:312.40px;top:274.50px;" width="1" height="1"><text style="font-size:10.4px;fill:#111;letter-spacing:0.217px;stroke:#111;stroke-width:0.25px;">First</text></svg>
<svg class="a tx" style="left:377.30px;top:274.50px;" width="1" height="1"><text style="font-size:10.4px;fill:#111;letter-spacing:-0.029px;stroke:#111;stroke-width:0.25px;">Second</text></svg>
<svg class="a tx" style="left:312.40px;top:290.50px;" width="1" height="1"><text style="font-size:10.4px;fill:#111;letter-spacing:-0.086px;stroke:#111;stroke-width:0.25px;">One a</text></svg>
<svg class="a tx" style="left:377.30px;top:290.50px;" width="1" height="1"><text style="font-size:10.4px;fill:#111;letter-spacing:0.094px;stroke:#111;stroke-width:0.25px;">One b</text></svg>
<svg class="a tx" style="left:312.40px;top:306.50px;" width="1" height="1"><text style="font-size:10.4px;fill:#111;letter-spacing:0.211px;stroke:#111;stroke-width:0.25px;">Two a</text></svg>
<svg class="a tx" style="left:377.30px;top:306.50px;" width="1" height="1"><text style="font-size:10.4px;fill:#111;letter-spacing:0.431px;stroke:#111;stroke-width:0.25px;">Two b</text></svg>
<svg class="a tx" style="left:312.40px;top:322.50px;" width="1" height="1"><text style="font-size:10.4px;fill:#111;letter-spacing:-0.024px;stroke:#111;stroke-width:0.25px;">etc...</text></svg>
<svg class="a tx" style="left:377.30px;top:322.50px;" width="1" height="1"><text style="font-size:10.4px;fill:#111;letter-spacing:0.351px;stroke:#111;stroke-width:0.25px;">more</text></svg>
<svg class="a" style="left:309px;top:261.5px;" width="132" height="66.3" viewBox="0 0 132 66.3"><rect x="0.8" y="0.8" width="130.6" height="64.1" fill="none" stroke="#1e7145" stroke-width="1.6"/></svg>
<div class="a" style="left:436px;top:323px;width:7px;height:7px;background:#fff;"></div>
<div class="a" style="left:437px;top:324px;width:5px;height:5px;background:#1e7145;"></div>
<div class="a" style="left:287.3px;top:898px;width:1401.3px;height:25.5px;background:#363636;"></div>
<div class="a" style="left:287.3px;top:923.3px;width:1401.3px;height:1.5px;background:#1c1c1c;"></div>
<div class="a" style="left:287.3px;top:924.8px;width:1401.3px;height:22px;background:#474747;"></div>
<div class="a" style="left:348px;top:898px;width:78px;height:21.5px;background:#fff;border-radius:0 0 3px 3px;"></div>
<svg class="a tx" style="left:367.25px;top:913.70px;" width="1" height="1"><text style="font-size:12.4px;fill:#21834f;letter-spacing:-0.361px;font-weight:bold;">Sheet1</text></svg>
<svg class="a" style="left:301.5px;top:906.5px;" width="7" height="10" viewBox="0 0 7 10"><path d="M7 0v10l-7-5z" fill="#5e5e5e"/></svg>
<svg class="a" style="left:324.5px;top:906.5px;" width="7" height="10" viewBox="0 0 7 10"><path d="M0 0v10l7-5z" fill="#6a6a6a"/></svg>
<svg class="a" style="left:441px;top:906px;" width="10" height="10" viewBox="0 0 10 10"><path d="M5 0v10M0 5h10" stroke="#d0d0d0" stroke-width="1.6"/></svg>
<div class="a" style="left:463.7px;top:899px;width:1px;height:20px;background:#666;"></div>
<svg class="a tx" style="left:1312.00px;top:940.70px;" width="1" height="1"><text style="font-size:12.6px;fill:#e4e4e4;letter-spacing:0.046px;">Count: 8</text></svg>
<div class="a" style="left:1370.7px;top:925px;width:37px;height:22px;background:#5b5b5b;"></div>
<svg class="a" style="left:1383px;top:928.7px;" width="13" height="13" viewBox="0 0 13 13"><g fill="none" stroke="#fff" stroke-width="1.1"><rect x="0.6" y="0.6" width="11.8" height="11.8"/><path d="M4.5 0.6v11.8M8.5 0.6v11.8M0.6 4.5h11.8M0.6 8.5h11.8"/></g></svg>
<svg class="a" style="left:1418px;top:928.7px;" width="15" height="13" viewBox="0 0 15 13"><g fill="none" stroke="#fff" stroke-width="1.1"><rect x="0.6" y="0.6" width="13.8" height="11.8"/><rect x="3.3" y="2.8" width="8.4" height="7.4"/><path d="M5 5h5M5 6.8h5M5 8.5h5" stroke-width="0.8"/></g></svg>
<svg class="a" style="left:1453.7px;top:928.5px;" width="14.5" height="13.5" viewBox="0 0 14.5 13.5"><g fill="none" stroke="#fff" stroke-width="1.3"><rect x="0.7" y="0.7" width="13" height="12"/><path d="M4 0.7v6M7.5 0.7v6M0.7 6.7h7"/></g></svg>
<div class="a" style="left:1486.8px;top:934.2px;width:8.2px;height:1.9px;background:#e0e0e0;"></div>
<div class="a" style="left:1503px;top:933px;width:97.5px;height:4px;background:#787878;border-radius:2px;"></div>
<div class="a" style="left:1545.5px;top:929.7px;width:11px;height:11px;background:#cfcfcf;border-radius:50%;"></div>
<svg class="a" style="left:1608.7px;top:931px;" width="8" height="8" viewBox="0 0 8 8"><path d="M4 0v8M0 4h8" stroke="#e8e8e8" stroke-width="1.8"/></svg>
<svg class="a tx" style="left:1633.70px;top:940.70px;" width="1" height="1"><text style="font-size:12.6px;fill:#e4e4e4;letter-spacing:-0.307px;">100%</text></svg>
<svg class="a tx" style="left:377.40px;top:94.60px;" width="1" height="1"><text style="font-size:11.2px;fill:#7a7a7a;letter-spacing:0.141px;">AutoSave</text></svg>
<div class="a" style="left:433.7px;top:84px;width:39px;height:13.6px;background:#323232;border-radius:7px;"></div>
<div class="a" style="left:434px;top:85px;width:12px;height:12px;background:#9c9c9c;border-radius:50%;"></div>
<svg class="a tx" style="left:449.20px;top:93.90px;" width="1" height="1"><text style="font-size:8px;fill:#9a9a9a;letter-spacing:-0.065px;font-weight:bold;">OFF</text></svg>
<svg class="a" style="left:483.5px;top:83px;" width="17" height="15" viewBox="0 0 17 15"><path d="M8.5 0.8l8 7.4l-1.3 1.3l-6.7-6.2l-6.7 6.2l-1.3-1.3z" fill="#fff"/><path d="M3 8.4l5.5-5l5.500 5v6.300h-3.500v-4.200h-4v4.200h-3.500z" fill="#fff"/></svg>
<svg class="a" style="left:509.7px;top:84px;" width="14.5" height="13.6" viewBox="0 0 14.5 13.6"><path d="M0 1.200q0-1.200 1.200-1.200h10.300l3 3v9.400q0 1.200-1.200 1.200h-12.100q-1.200 0-1.200-1.200z" fill="#fff"/><rect x="2.800" y="1.800" width="8.200" height="4.600" fill="#444"/><rect x="4" y="9.600" width="6.500" height="4" fill="#444"/><rect x="5.300" y="10.800" width="2" height="2.800" fill="#fff"/></svg>
<svg class="a" style="left:534.8px;top:83.5px;" width="16" height="14.5" viewBox="0 0 16 14.5"><path d="M5.800 0.800l-5.200 4.500l5.200 4.600M0.800 5.300h9.500q4.600 0 4.600 3.600q0 4-4.700 4.800" fill="none" stroke="#8a8a8a" stroke-width="1.700" stroke-linejoin="miter"/></svg>
<svg class="a" style="left:557.55px;top:89.2px;" width="5.1" height="4.8" viewBox="0 0 5.1 4.8"><path d="M0 0l2.55 3.8 l2.55 -3.8" fill="none" stroke="#8a8a8a" stroke-width="1.2" stroke-linecap="round" stroke-linejoin="round"/></svg>
<svg class="a" style="left:572px;top:83.5px;" width="15.5" height="15" viewBox="0 0 15.5 15"><path d="M1.500 4.300a6.300 6.300 0 1 0 10.800-0.300" fill="none" stroke="#8a8a8a" stroke-width="1.700"/><path d="M14.600 1.100h-6.600v7" fill="none" stroke="#8a8a8a" stroke-width="1.700"/></svg>
<svg class="a" style="left:601px;top:88px;" width="8" height="8" viewBox="0 0 8 8"><rect x="0.300" y="0.200" width="7.200" height="1.500" fill="#fff"/><path d="M0.300 3.500h7.200l-3.600 4.300z" fill="#fff"/></svg>
<svg class="a" style="left:878px;top:83px;" width="13.5" height="15.5" viewBox="0 0 13.5 15.5"><path d="M2.500 0h7l4 4v10.300q0 1.200-1.200 1.200h-8.600q-1.200 0-1.200-1.200z" fill="#fff"/><path d="M9.500 0v4h4z" fill="#ccc"/><rect x="7" y="6" width="5.500" height="6" fill="none" stroke="#2f9e5b" stroke-width="0.800"/><path d="M7 9h5.500M9.800 6v6" stroke="#2f9e5b" stroke-width="0.800"/><rect x="0" y="4.300" width="7.300" height="7.600" rx="0.800" fill="#1f8a4c"/><path d="M2 6l3.300 4.300M5.300 6l-3.300 4.300" stroke="#fff" stroke-width="1.100"/></svg>
<svg class="a tx" style="left:896.90px;top:96.60px;" width="1" height="1"><text style="font-size:13.9px;fill:#f4f4f4;letter-spacing:0.035px;">mikeski.net-sc-excel-mvrs-demo</text></svg>
<svg class="a" style="left:1619px;top:84px;" width="14" height="15" viewBox="0 0 14 15"><circle cx="5.600" cy="5.600" r="4.700" fill="none" stroke="#eee" stroke-width="1.500"/><path d="M9 9.200l4.200 4.800" stroke="#eee" stroke-width="1.700" stroke-linecap="round"/></svg>
<svg class="a" style="left:1649.5px;top:82.8px;" width="16.4" height="16.4" viewBox="0 0 16.4 16.4"><circle cx="8.200" cy="8.200" r="7.400" fill="none" stroke="#eee" stroke-width="1.400"/><path d="M6 5v3.300M10.400 5v3.300" stroke="#eee" stroke-width="1.500"/><path d="M4.300 9.800a4.200 4.200 0 0 0 7.800 0" fill="none" stroke="#eee" stroke-width="1.400"/></svg>
<svg class="a" style="left:1671.85px;top:89.65px;" width="5.1" height="3.9" viewBox="0 0 5.1 3.9"><path d="M0 0l2.55 2.9 l2.55 -2.9" fill="none" stroke="#eee" stroke-width="1.6" stroke-linecap="round" stroke-linejoin="round"/></svg>
<svg class="a tx" style="left:298.40px;top:126.50px;" width="1" height="1"><text style="font-size:12.6px;fill:#fff;letter-spacing:0.523px;font-weight:bold;">Home</text></svg>
<svg class="a tx" style="left:359.50px;top:126.50px;" width="1" height="1"><text style="font-size:12.6px;fill:#e6e6e6;letter-spacing:0.665px;stroke:#e6e6e6;stroke-width:0.45px;">Insert</text></svg>
<svg class="a tx" style="left:420.60px;top:126.50px;" width="1" height="1"><text style="font-size:12.6px;fill:#e6e6e6;letter-spacing:0.552px;stroke:#e6e6e6;stroke-width:0.45px;">Developer</text></svg>
<svg class="a tx" style="left:508.40px;top:126.50px;" width="1" height="1"><text style="font-size:12.6px;fill:#e6e6e6;letter-spacing:0.399px;stroke:#e6e6e6;stroke-width:0.45px;">Draw</text></svg>
<svg class="a tx" style="left:564.50px;top:126.50px;" width="1" height="1"><text style="font-size:12.6px;fill:#e6e6e6;letter-spacing:0.458px;stroke:#e6e6e6;stroke-width:0.45px;">Page Layout</text></svg>
<svg class="a tx" style="left:666.50px;top:126.50px;" width="1" height="1"><text style="font-size:12.6px;fill:#e6e6e6;letter-spacing:0.524px;stroke:#e6e6e6;stroke-width:0.45px;">Formulas</text></svg>
<svg class="a tx" style="left:749.60px;top:126.50px;" width="1" height="1"><text style="font-size:12.6px;fill:#e6e6e6;letter-spacing:0.246px;stroke:#e6e6e6;stroke-width:0.45px;">Data</text></svg>
<svg class="a tx" style="left:802.50px;top:126.50px;" width="1" height="1"><text style="font-size:12.6px;fill:#e6e6e6;letter-spacing:0.281px;stroke:#e6e6e6;stroke-width:0.45px;">Review</text></svg>
<svg class="a tx" style="left:870.30px;top:126.50px;" width="1" height="1"><text style="font-size:12.6px;fill:#e6e6e6;letter-spacing:0.529px;stroke:#e6e6e6;stroke-width:0.45px;">View</text></svg>
<div class="a" style="left:296.3px;top:132.2px;width:41.7px;height:2.8px;background:#fff;border-radius:1.4px;"></div>
<div class="a" style="left:1506.7px;top:111px;width:66.3px;height:24px;background:#636363;border-radius:4px;"></div>
<svg class="a" style="left:1515px;top:117px;" width="12.5" height="12" viewBox="0 0 12.5 12"><path d="M0.700 5.500v5.800h9v-2.500" fill="none" stroke="#eee" stroke-width="1.300"/><path d="M3.300 8.500q0.500-4.500 5-4.800v-2.700l3.800 3.900l-3.800 3.900v-2.700q-3-0.200-5 2.400z" fill="none" stroke="#eee" stroke-width="1.100" stroke-linejoin="round"/></svg>
<svg class="a tx" style="left:1532.70px;top:127.00px;" width="1" height="1"><text style="font-size:12px;fill:#f2f2f2;letter-spacing:0.030px;font-weight:bold;">Share</text></svg>
<div class="a" style="left:1583px;top:111px;width:95px;height:24px;background:#636363;border-radius:4px;"></div>
<svg class="a" style="left:1592px;top:117px;" width="12" height="12.5" viewBox="0 0 12 12.5"><path d="M0.700 0.700h10.600v7.600h-5.300l-2.700 2.900v-2.900h-2.600z" fill="none" stroke="#eee" stroke-width="1.300" stroke-linejoin="round"/></svg>
<svg class="a tx" style="left:1609.00px;top:127.00px;" width="1" height="1"><text style="font-size:12px;fill:#f2f2f2;letter-spacing:0.124px;font-weight:bold;">Comments</text></svg>
<svg class="a" style="left:303.5px;top:145.5px;" width="28" height="31" viewBox="0 0 28 31"><path d="M1.500 5h19v22.500h-19z" fill="none" stroke="#f39a2b" stroke-width="2.200"/><path d="M5 8.200v-3.700h3.200q0.300-3.300 2.800-3.300t2.800 3.300h3.200v3.700z" fill="#2b2b2b" stroke="#dcdcdc" stroke-width="1"/><rect x="13.800" y="12.800" width="13.400" height="17.200" fill="#2b2b2b" stroke="#eee" stroke-width="1.200"/></svg>
<svg class="a" style="left:336.75px;top:158.75px;" width="5.1" height="3.9" viewBox="0 0 5.1 3.9"><path d="M0 0l2.55 2.9 l2.55 -2.9" fill="none" stroke="#f0f0f0" stroke-width="1.6" stroke-linecap="round" stroke-linejoin="round"/></svg>
<svg class="a tx" style="left:307.20px;top:189.80px;" width="1" height="1"><text style="font-size:10.8px;fill:#f0f0f0;letter-spacing:-0.043px;stroke:#f0f0f0;stroke-width:0.35px;">Paste</text></svg>
<svg class="a" style="left:352.5px;top:144px;" width="11" height="16.5" viewBox="0 0 11 16.5"><path d="M2.300 0.300l5.200 11.500M8.700 0.300l-5.200 11.500" stroke="#d8d8d8" stroke-width="1.100" fill="none"/><circle cx="2.200" cy="14" r="1.600" fill="none" stroke="#3a96dd" stroke-width="1.100"/><circle cx="8.800" cy="14" r="1.600" fill="none" stroke="#3a96dd" stroke-width="1.100"/></svg>
<svg class="a" style="left:350px;top:166px;" width="16.5" height="16.5" viewBox="0 0 16.5 16.5"><path d="M5.500 11.500h-4.800v-10.800h5.500l2.300 2.300" fill="none" stroke="#d8d8d8" stroke-width="1.100"/><path d="M6.500 4.700h5.500l3.300 3.300v7.600h-8.800z" fill="#2b2b2b" stroke="#e6e6e6" stroke-width="1.100"/><path d="M12 4.700v3.300h3.300M8.800 10.800h4.200M8.800 13h4.200" fill="none" stroke="#e6e6e6" stroke-width="1"/></svg>
<svg class="a" style="left:372.55px;top:172.95px;" width="5.1" height="3.9" viewBox="0 0 5.1 3.9"><path d="M0 0l2.55 2.9 l2.55 -2.9" fill="none" stroke="#f0f0f0" stroke-width="1.6" stroke-linecap="round" stroke-linejoin="round"/></svg>
<svg class="a" style="left:349.5px;top:187.5px;" width="17" height="15.5" viewBox="0 0 17 15.5"><path d="M16 1.500l-4.500 5.300" stroke="#e8e8e8" stroke-width="2.300" stroke-linecap="round"/><path d="M9 4.300l4.300 3.400l-1.300 1.800l-4.400-3.400z" fill="#e8e8e8"/><path d="M7 6.800l4.700 3.600l-4 4.800l-7.200-5.500z" fill="#f6c25b" stroke="#e8e8e8" stroke-width="0.800"/><path d="M3 10.700l4.700 3.700" stroke="#d98a1c" stroke-width="1.200"/></svg>
<div class="a" style="left:390.7px;top:141.3px;width:1.2px;height:61.4px;background:#505050;"></div>
<div class="a" style="left:402px;top:146px;width:140.8px;height:23.8px;background:#383838;border-radius:3.500px;border-bottom:1px solid #444;"></div>
<svg class="a tx" style="left:408.20px;top:162.90px;" width="1" height="1"><text style="font-size:12.4px;fill:#f0f0f0;letter-spacing:0.135px;stroke:#f0f0f0;stroke-width:0.3px;">Calibri (Body)</text></svg>
<svg class="a" style="left:532.85px;top:156.95px;" width="5.1" height="3.9" viewBox="0 0 5.1 3.9"><path d="M0 0l2.55 2.9 l2.55 -2.9" fill="none" stroke="#f0f0f0" stroke-width="1.6" stroke-linecap="round" stroke-linejoin="round"/></svg>
<div class="a" style="left:545.2px;top:146px;width:53.7px;height:23.8px;background:#383838;border-radius:3.500px;border-bottom:1px solid #444;"></div>
<svg class="a tx" style="left:550.80px;top:162.90px;" width="1" height="1"><text style="font-size:12.4px;fill:#f0f0f0;letter-spacing:-0.646px;stroke:#f0f0f0;stroke-width:0.3px;">12</text></svg>
<svg class="a" style="left:588.55px;top:156.95px;" width="5.1" height="3.9" viewBox="0 0 5.1 3.9"><path d="M0 0l2.55 2.9 l2.55 -2.9" fill="none" stroke="#f0f0f0" stroke-width="1.6" stroke-linecap="round" stroke-linejoin="round"/></svg>
<svg class="a tx" style="left:608.00px;top:161.60px;" width="1" height="1"><text style="font-size:12.8px;fill:#d0d0d0;">A</text></svg>
<svg class="a" style="left:616px;top:150.8px;" width="5.2" height="3.4" viewBox="0 0 5.2 3.4"><path d="M0.400 3l2.200-2.400l2.200 2.400" fill="none" stroke="#3a96dd" stroke-width="1.100"/></svg>
<svg class="a tx" style="left:634.00px;top:161.60px;" width="1" height="1"><text style="font-size:10.8px;fill:#d0d0d0;">A</text></svg>
<svg class="a" style="left:641.9px;top:150.8px;" width="5.2" height="3.4" viewBox="0 0 5.2 3.4"><path d="M0.400 0.400l2.200 2.400l2.200-2.400" fill="none" stroke="#3a96dd" stroke-width="1.100"/></svg>
<svg class="a tx" style="left:410.30px;top:193.50px;" width="1" height="1"><text style="font-size:12.6px;fill:#e8e8e8;font-weight:bold;">B</text></svg>
<svg class="a tx" style="left:437.50px;top:193.50px;" width="1" height="1"><text style="font-size:13.5px;fill:#e0e0e0;font-style:italic;font-family:'Liberation Serif',serif;">I</text></svg>
<svg class="a tx" style="left:460.90px;top:193.30px;" width="1" height="1"><text style="font-size:12.4px;fill:#e0e0e0;">U</text></svg>
<div class="a" style="left:460.7px;top:195.2px;width:9.3px;height:1.1px;background:#e0e0e0;"></div>
<svg class="a" style="left:481.55px;top:188.85px;" width="5.1" height="3.9" viewBox="0 0 5.1 3.9"><path d="M0 0l2.55 2.9 l2.55 -2.9" fill="none" stroke="#f0f0f0" stroke-width="1.6" stroke-linecap="round" stroke-linejoin="round"/></svg>
<div class="a" style="left:497.8px;top:181.3px;width:1.2px;height:17.4px;background:#484848;"></div>
<svg class="a" style="left:511px;top:182px;" width="15.5" height="15.5" viewBox="0 0 15.5 15.5"><rect x="0.500" y="0.500" width="14.200" height="13" fill="none" stroke="#7a7a7a" stroke-width="0.900" stroke-dasharray="2 1.300"/><path d="M7.600 0.500v13M0.500 7h14.200" stroke="#7a7a7a" stroke-width="0.900" stroke-dasharray="2 1.300"/><path d="M0 14.700h15.300" stroke="#eee" stroke-width="1.200"/></svg>
<svg class="a" style="left:534.55px;top:188.85px;" width="5.1" height="3.9" viewBox="0 0 5.1 3.9"><path d="M0 0l2.55 2.9 l2.55 -2.9" fill="none" stroke="#f0f0f0" stroke-width="1.6" stroke-linecap="round" stroke-linejoin="round"/></svg>
<div class="a" style="left:550.9px;top:181.3px;width:1.2px;height:17.4px;background:#484848;"></div>
<svg class="a" style="left:565px;top:181px;" width="15" height="13" viewBox="0 0 15 13"><path d="M7.200 1.700l-5.400 6.300l4.500 4.200l5.700-5.400z" fill="none" stroke="#e8e8e8" stroke-width="1.100" stroke-linejoin="round"/><path d="M6 3.200q0.300-2.200 1.800-2.200q1.600 0 1.500 3.300" fill="none" stroke="#e8e8e8" stroke-width="0.900"/><path d="M11.600 4.800q2.600 2.200 1.600 6.200q-1.500-2-1.600-6.200z" fill="#5fb2f0"/></svg>
<div class="a" style="left:564px;top:194px;width:16.3px;height:4px;background:#ffef00;"></div>
<svg class="a" style="left:587.55px;top:188.85px;" width="5.1" height="3.9" viewBox="0 0 5.1 3.9"><path d="M0 0l2.55 2.9 l2.55 -2.9" fill="none" stroke="#f0f0f0" stroke-width="1.6" stroke-linecap="round" stroke-linejoin="round"/></svg>
<svg class="a tx" style="left:605.30px;top:193.00px;" width="1" height="1"><text style="font-size:15.3px;fill:#e0e0e0;">A</text></svg>
<div class="a" style="left:601.9px;top:194px;width:16.3px;height:4px;background:#ff2a00;"></div>
<svg class="a" style="left:625.55px;top:188.85px;" width="5.1" height="3.9" viewBox="0 0 5.1 3.9"><path d="M0 0l2.55 2.9 l2.55 -2.9" fill="none" stroke="#f0f0f0" stroke-width="1.6" stroke-linecap="round" stroke-linejoin="round"/></svg>
<div class="a" style="left:660.9px;top:141.3px;width:1.2px;height:61.4px;background:#505050;"></div>
<div class="a" style="left:676.9px;top:149.95px;width:14.2px;height:1.1px;background:#e4e4e4;"></div>
<div class="a" style="left:679.9px;top:153.95px;width:8.5px;height:1.1px;background:#e4e4e4;"></div>
<div class="a" style="left:676.9px;top:157.95px;width:14.2px;height:1.1px;background:#e4e4e4;"></div>
<div class="a" style="left:703px;top:152.85px;width:14.2px;height:1.1px;background:#e4e4e4;"></div>
<div class="a" style="left:706px;top:156.95px;width:8.5px;height:1.1px;background:#e4e4e4;"></div>
<div class="a" style="left:703px;top:160.95px;width:14.2px;height:1.1px;background:#e4e4e4;"></div>
<div class="a" style="left:724px;top:146px;width:24px;height:24px;background:#464646;border-radius:3.500px;"></div>
<div class="a" style="left:729px;top:156.85px;width:14.2px;height:1.1px;background:#e4e4e4;"></div>
<div class="a" style="left:732px;top:160.85px;width:8.5px;height:1.1px;background:#e4e4e4;"></div>
<div class="a" style="left:729px;top:164.95px;width:14.2px;height:1.1px;background:#e4e4e4;"></div>
<div class="a" style="left:755.8px;top:149.2px;width:1.2px;height:17.7px;background:#484848;"></div>
<svg class="a" style="left:766px;top:147px" width="22" height="22"><text transform="translate(7.300 14.800) rotate(-58)" style="font-size:10.500px;fill:#d8d8d8;">ab</text><path d="M8.300 17.800l10.200-10.200M14 7.300h4.800v4.800" fill="none" stroke="#3a96dd" stroke-width="1.100"/></svg>
<svg class="a" style="left:792.25px;top:156.95px;" width="5.1" height="3.9" viewBox="0 0 5.1 3.9"><path d="M0 0l2.55 2.9 l2.55 -2.9" fill="none" stroke="#f0f0f0" stroke-width="1.6" stroke-linecap="round" stroke-linejoin="round"/></svg>
<div class="a" style="left:822.9px;top:141.3px;width:1.2px;height:61.4px;background:#505050;"></div>
<svg class="a tx" style="left:838.00px;top:157.00px;" width="1" height="1"><text style="font-size:9.2px;fill:#d8d8d8;letter-spacing:0.983px;">ab</text></svg>
<svg class="a tx" style="left:838.00px;top:165.30px;" width="1" height="1"><text style="font-size:9.2px;fill:#d8d8d8;">c</text></svg>
<svg class="a" style="left:843.5px;top:158px;" width="9" height="8.5" viewBox="0 0 9 8.5"><path d="M7.500 0.300q1.500 4.700-3 4.700h-3.800M3.700 2l-3 3l3 3" fill="none" stroke="#3a96dd" stroke-width="1.100"/></svg>
<svg class="a" style="left:859.55px;top:156.95px;" width="5.1" height="3.9" viewBox="0 0 5.1 3.9"><path d="M0 0l2.55 2.9 l2.55 -2.9" fill="none" stroke="#f0f0f0" stroke-width="1.6" stroke-linecap="round" stroke-linejoin="round"/></svg>
<div class="a" style="left:676.9px;top:183.15px;width:14.2px;height:1.1px;background:#e4e4e4;"></div>
<div class="a" style="left:676.9px;top:187.05px;width:10px;height:1.1px;background:#e4e4e4;"></div>
<div class="a" style="left:676.9px;top:191.05px;width:14.2px;height:1.1px;background:#e4e4e4;"></div>
<div class="a" style="left:676.9px;top:195.05px;width:10px;height:1.1px;background:#e4e4e4;"></div>
<div class="a" style="left:703px;top:183.15px;width:14.2px;height:1.1px;background:#e4e4e4;"></div>
<div class="a" style="left:705.3px;top:187.05px;width:9.5px;height:1.1px;background:#e4e4e4;"></div>
<div class="a" style="left:703px;top:191.05px;width:14.2px;height:1.1px;background:#e4e4e4;"></div>
<div class="a" style="left:705.3px;top:195.05px;width:9.5px;height:1.1px;background:#e4e4e4;"></div>
<div class="a" style="left:729px;top:183.15px;width:14.2px;height:1.1px;background:#e4e4e4;"></div>
<div class="a" style="left:733px;top:187.05px;width:10.2px;height:1.1px;background:#e4e4e4;"></div>
<div class="a" style="left:729px;top:191.05px;width:14.2px;height:1.1px;background:#e4e4e4;"></div>
<div class="a" style="left:733px;top:195.05px;width:10.2px;height:1.1px;background:#e4e4e4;"></div>
<div class="a" style="left:755.8px;top:181px;width:1.2px;height:17.7px;background:#484848;"></div>
<div class="a" style="left:769.8px;top:183.15px;width:14.2px;height:1.1px;background:#e4e4e4;"></div>
<div class="a" style="left:779px;top:187.05px;width:5px;height:1.1px;background:#e4e4e4;"></div>
<div class="a" style="left:779px;top:191.05px;width:5px;height:1.1px;background:#e4e4e4;"></div>
<div class="a" style="left:769.8px;top:195.05px;width:14.2px;height:1.1px;background:#e4e4e4;"></div>
<svg class="a" style="left:769.8px;top:186.6px;" width="7" height="6" viewBox="0 0 7 6"><path d="M6.500 3h-6M3 0.300l-2.700 2.700l2.700 2.700" fill="none" stroke="#3a96dd" stroke-width="1.100"/></svg>
<div class="a" style="left:796px;top:183.15px;width:14.2px;height:1.1px;background:#e4e4e4;"></div>
<div class="a" style="left:805.2px;top:187.05px;width:5px;height:1.1px;background:#e4e4e4;"></div>
<div class="a" style="left:805.2px;top:191.05px;width:5px;height:1.1px;background:#e4e4e4;"></div>
<div class="a" style="left:796px;top:195.05px;width:14.2px;height:1.1px;background:#e4e4e4;"></div>
<svg class="a" style="left:796px;top:186.6px;" width="7" height="6" viewBox="0 0 7 6"><path d="M0 3h6M3.500 0.300l2.700 2.700l-2.700 2.700" fill="none" stroke="#3a96dd" stroke-width="1.100"/></svg>
<svg class="a" style="left:836px;top:181.9px;" width="15.5" height="15" viewBox="0 0 15.5 15"><rect x="0.500" y="0.500" width="14.300" height="13.900" fill="none" stroke="#e4e4e4" stroke-width="1"/><path d="M7.600 0.500v4M7.600 10.500v4" stroke="#e4e4e4" stroke-width="1"/><rect x="0.500" y="4.300" width="14.300" height="6.400" fill="#2b2b2b" stroke="#3a96dd" stroke-width="1.100"/><path d="M2.500 7.500h10.300M4.500 5.600l-2 1.900l2 1.900M10.800 5.600l2 1.900l-2 1.900" fill="none" stroke="#3a96dd" stroke-width="1"/></svg>
<svg class="a" style="left:859.55px;top:188.85px;" width="5.1" height="3.9" viewBox="0 0 5.1 3.9"><path d="M0 0l2.55 2.9 l2.55 -2.9" fill="none" stroke="#f0f0f0" stroke-width="1.6" stroke-linecap="round" stroke-linejoin="round"/></svg>
<div class="a" style="left:877.9px;top:141.3px;width:1.2px;height:61.4px;background:#505050;"></div>
<div class="a" style="left:889px;top:146px;width:155px;height:23.8px;background:#383838;border-radius:3.500px;border-bottom:1px solid #444;"></div>
<svg class="a tx" style="left:895.30px;top:162.90px;" width="1" height="1"><text style="font-size:12.4px;fill:#f0f0f0;letter-spacing:-0.159px;stroke:#f0f0f0;stroke-width:0.3px;">General</text></svg>
<svg class="a" style="left:1033.95px;top:156.95px;" width="5.1" height="3.9" viewBox="0 0 5.1 3.9"><path d="M0 0l2.55 2.9 l2.55 -2.9" fill="none" stroke="#f0f0f0" stroke-width="1.6" stroke-linecap="round" stroke-linejoin="round"/></svg>
<svg class="a tx" style="left:896.00px;top:195.80px;" width="1" height="1"><text style="font-size:16.5px;fill:#dcdcdc;">$</text></svg>
<svg class="a" style="left:916.45px;top:188.85px;" width="5.1" height="3.9" viewBox="0 0 5.1 3.9"><path d="M0 0l2.55 2.9 l2.55 -2.9" fill="none" stroke="#f0f0f0" stroke-width="1.6" stroke-linecap="round" stroke-linejoin="round"/></svg>
<svg class="a tx" style="left:931.00px;top:196.40px;" width="1" height="1"><text style="font-size:17.3px;fill:#dcdcdc;">%</text></svg>
<svg class="a" style="left:961.5px;top:184.5px;" width="8.5" height="12.5" viewBox="0 0 8.5 12.5"><path d="M4.500 0.200a3.300 3.300 0 0 1 3.600 3.600q0 5.300-6.800 8.300l-0.500-0.800q4-2.200 4.200-4.700q-3.600 0.200-3.800-3a3.300 3.300 0 0 1 3.300-3.400z" fill="#d8d8d8"/></svg>
<div class="a" style="left:984.8px;top:181px;width:1.2px;height:17.7px;background:#484848;"></div>
<svg class="a" style="left:998px;top:182.5px;" width="9.5" height="8" viewBox="0 0 9.5 8"><path d="M9 4h-8M4.300 0.500l-3.600 3.500l3.600 3.500" fill="none" stroke="#3a96dd" stroke-width="1.200"/></svg>
<svg class="a tx" style="left:1006.50px;top:188.40px;" width="1" height="1"><text style="font-size:8.8px;fill:#d4d4d4;letter-spacing:-0.170px;">.0</text></svg>
<svg class="a tx" style="left:999.70px;top:196.80px;" width="1" height="1"><text style="font-size:8.8px;fill:#d4d4d4;letter-spacing:0.422px;">.00</text></svg>
<svg class="a tx" style="left:1025.70px;top:188.40px;" width="1" height="1"><text style="font-size:8.8px;fill:#d4d4d4;letter-spacing:0.422px;">.00</text></svg>
<svg class="a" style="left:1023.9px;top:189.5px;" width="9.5" height="8" viewBox="0 0 9.5 8"><path d="M0.500 4h8M5.200 0.500l3.600 3.500l-3.600 3.500" fill="none" stroke="#3a96dd" stroke-width="1.200"/></svg>
<svg class="a tx" style="left:1032.50px;top:196.80px;" width="1" height="1"><text style="font-size:8.8px;fill:#d4d4d4;letter-spacing:-0.170px;">.0</text></svg>
<div class="a" style="left:1053.8px;top:141.3px;width:1.2px;height:61.4px;background:#505050;"></div>
<svg class="a" style="left:1075.9px;top:149.2px;" width="28.5" height="22" viewBox="0 0 28.5 22"><rect x="5.300" y="0.500" width="12.400" height="7" fill="#d12215" stroke="#f0625a" stroke-width="0.800"/><rect x="5.300" y="7.500" width="8.600" height="6.900" fill="#0c5db5" stroke="#5fb2f0" stroke-width="0.800"/><rect x="5.300" y="14.400" width="14.600" height="7" fill="#d12215" stroke="#f0625a" stroke-width="0.800"/><g fill="none" stroke="#dcdcdc" stroke-width="1"><rect x="0.500" y="0.500" width="27.300" height="21"/><path d="M0.500 7.400h4.800M17.700 7.400h10.100M0.500 14.400h4.800M13.900 14.400h13.900M5.100 0.500v21M22.100 0.500v21"/></g></svg>
<svg class="a" style="left:1111.45px;top:158.85px;" width="5.1" height="3.9" viewBox="0 0 5.1 3.9"><path d="M0 0l2.55 2.9 l2.55 -2.9" fill="none" stroke="#f0f0f0" stroke-width="1.6" stroke-linecap="round" stroke-linejoin="round"/></svg>
<svg class="a tx" style="left:1067.40px;top:189.80px;" width="1" height="1"><text style="font-size:10.6px;fill:#f0f0f0;letter-spacing:0.269px;stroke:#f0f0f0;stroke-width:0.35px;">Conditional</text></svg>
<svg class="a tx" style="left:1068.40px;top:201.90px;" width="1" height="1"><text style="font-size:10.6px;fill:#f0f0f0;letter-spacing:0.334px;stroke:#f0f0f0;stroke-width:0.35px;">Formatting</text></svg>
<svg class="a" style="left:1133px;top:149px;" width="30" height="27" viewBox="0 0 30 27"><rect x="9.700" y="7.400" width="18.300" height="14" fill="#0f6ac7"/><g fill="none" stroke="#dcdcdc" stroke-width="1"><rect x="0.500" y="0.500" width="27.500" height="21"/><path d="M0.500 7.400h27.500M0.500 14.400h27.500M9.700 0.500v21M18.800 0.500v21"/></g><path d="M28.7 8l-13 13.500" stroke="#2b2b2b" stroke-width="4.600" stroke-linecap="round"/><path d="M28.7 8l-12.500 13" stroke="#dcdcdc" stroke-width="2.400" stroke-linecap="round"/><path d="M28.4 8.3l-11.500 12" stroke="#444" stroke-width="0.700"/><path d="M15.4 20.2q-4.500-0.500-6.200 3.300q-1 2.200-4 2.800q4.500 2 8.500 0.300q3.300-1.600 3.700-4.600z" fill="#0f6ac7" stroke="#2b2b2b" stroke-width="0.600"/></svg>
<svg class="a" style="left:1168.35px;top:158.85px;" width="5.1" height="3.9" viewBox="0 0 5.1 3.9"><path d="M0 0l2.55 2.9 l2.55 -2.9" fill="none" stroke="#f0f0f0" stroke-width="1.6" stroke-linecap="round" stroke-linejoin="round"/></svg>
<svg class="a tx" style="left:1134.80px;top:189.80px;" width="1" height="1"><text style="font-size:10.6px;fill:#f0f0f0;letter-spacing:0.238px;stroke:#f0f0f0;stroke-width:0.35px;">Format</text></svg>
<svg class="a tx" style="left:1132.00px;top:201.90px;" width="1" height="1"><text style="font-size:10.6px;fill:#f0f0f0;letter-spacing:0.214px;stroke:#f0f0f0;stroke-width:0.35px;">as Table</text></svg>
<svg class="a" style="left:1183px;top:149px;" width="30" height="27" viewBox="0 0 30 27"><rect x="5.200" y="5" width="17.800" height="11.500" fill="#0f6ac7"/><g fill="none" stroke="#dcdcdc" stroke-width="1"><rect x="0.500" y="0.500" width="27.500" height="21"/><path d="M0.500 5h27.500M0.500 16.500h27.500M5.200 0.500v21M23 0.500v21"/></g><path d="M28.7 8l-13 13.500" stroke="#2b2b2b" stroke-width="4.600" stroke-linecap="round"/><path d="M28.7 8l-12.500 13" stroke="#dcdcdc" stroke-width="2.400" stroke-linecap="round"/><path d="M28.4 8.3l-11.500 12" stroke="#444" stroke-width="0.700"/><path d="M15.4 20.2q-4.500-0.500-6.200 3.300q-1 2.200-4 2.800q4.500 2 8.500 0.300q3.300-1.600 3.700-4.600z" fill="#0f6ac7" stroke="#2b2b2b" stroke-width="0.600"/></svg>
<svg class="a" style="left:1218.35px;top:158.85px;" width="5.1" height="3.9" viewBox="0 0 5.1 3.9"><path d="M0 0l2.55 2.9 l2.55 -2.9" fill="none" stroke="#f0f0f0" stroke-width="1.6" stroke-linecap="round" stroke-linejoin="round"/></svg>
<svg class="a tx" style="left:1192.80px;top:189.80px;" width="1" height="1"><text style="font-size:10.6px;fill:#f0f0f0;letter-spacing:0.085px;stroke:#f0f0f0;stroke-width:0.35px;">Cell</text></svg>
<svg class="a tx" style="left:1187.30px;top:201.90px;" width="1" height="1"><text style="font-size:10.6px;fill:#f0f0f0;letter-spacing:0.189px;stroke:#f0f0f0;stroke-width:0.35px;">Styles</text></svg>
<div class="a" style="left:1237px;top:141.3px;width:1.2px;height:61.4px;background:#505050;"></div>
<svg class="a" style="left:1251px;top:145.2px;" width="16.5" height="14" viewBox="0 0 16.5 14"><rect x="7" y="4.700" width="8.500" height="4.400" fill="#0f6ac7"/><g fill="none" stroke="#dcdcdc" stroke-width="1"><path d="M0.500 0.500h15v12.800h-15zM0.500 4.700h15M0.500 9.100h15M5.500 0.500v4.200M10.500 0.500v12.800M5.500 9.100v4.200"/></g><path d="M8.500 6.900h-7.500M3.800 4.200l-2.800 2.700l2.800 2.700" fill="none" stroke="#3a96dd" stroke-width="1.100"/></svg>
<svg class="a tx" style="left:1273.50px;top:156.00px;" width="1" height="1"><text style="font-size:10.6px;fill:#f0f0f0;letter-spacing:0.248px;stroke:#f0f0f0;stroke-width:0.35px;">Insert</text></svg>
<svg class="a" style="left:1309.55px;top:150.95px;" width="5.1" height="3.9" viewBox="0 0 5.1 3.9"><path d="M0 0l2.55 2.9 l2.55 -2.9" fill="none" stroke="#f0f0f0" stroke-width="1.6" stroke-linecap="round" stroke-linejoin="round"/></svg>
<svg class="a" style="left:1251px;top:167.4px;" width="16.5" height="14" viewBox="0 0 16.5 14"><g fill="none" stroke="#dcdcdc" stroke-width="1"><path d="M0.500 0.500h15M0.500 13.300h15M0.500 0.500v4M0.500 9.300v4M15.500 0.500v4M15.500 9.300v4M5.500 0.500v3.500M10.500 0.500v3.500M5.500 9.800v3.500M10.500 9.800v3.500M0.500 4.400h3M0.500 9.300h3"/></g><rect x="3.700" y="4.200" width="5" height="5" fill="#0f6ac7" stroke="#3a96dd" stroke-width="0.800"/><path d="M10.600 4.200l5 5.200M15.600 4.200l-5 5.200" stroke="#e0443c" stroke-width="1.200"/></svg>
<svg class="a tx" style="left:1273.50px;top:178.00px;" width="1" height="1"><text style="font-size:10.6px;fill:#f0f0f0;letter-spacing:0.110px;stroke:#f0f0f0;stroke-width:0.35px;">Delete</text></svg>
<svg class="a" style="left:1312.55px;top:172.95px;" width="5.1" height="3.9" viewBox="0 0 5.1 3.9"><path d="M0 0l2.55 2.9 l2.55 -2.9" fill="none" stroke="#f0f0f0" stroke-width="1.6" stroke-linecap="round" stroke-linejoin="round"/></svg>
<svg class="a" style="left:1251px;top:188.2px;" width="16.5" height="16" viewBox="0 0 16.5 16"><path d="M3 1.500h10M3 0v3M13 0v3" stroke="#3a96dd" stroke-width="1"/><g fill="none" stroke="#dcdcdc" stroke-width="1"><path d="M0.500 4.500h15v11h-15zM0.500 8h15M0.500 12h15M4 4.500v11M12 4.500v11"/></g><rect x="4.300" y="7" width="7.500" height="5.300" fill="#0f6ac7" stroke="#2b2b2b" stroke-width="0.600"/></svg>
<svg class="a tx" style="left:1273.50px;top:199.80px;" width="1" height="1"><text style="font-size:10.6px;fill:#f0f0f0;letter-spacing:0.122px;stroke:#f0f0f0;stroke-width:0.35px;">Format</text></svg>
<svg class="a" style="left:1315.55px;top:194.55px;" width="5.1" height="3.9" viewBox="0 0 5.1 3.9"><path d="M0 0l2.55 2.9 l2.55 -2.9" fill="none" stroke="#f0f0f0" stroke-width="1.6" stroke-linecap="round" stroke-linejoin="round"/></svg>
<div class="a" style="left:1333.9px;top:141.3px;width:1.2px;height:61.4px;background:#505050;"></div>
<svg class="a" style="left:1349.8px;top:145.2px;" width="12.6" height="13.6" viewBox="0 0 12.6 13.6"><path d="M12 2.800v-2.200h-11.200l6.300 6.200l-6.300 6.200h11.200v-2.200" fill="none" stroke="#dcdcdc" stroke-width="1.100" stroke-linejoin="round"/></svg>
<svg class="a" style="left:1370.35px;top:150.95px;" width="5.1" height="3.9" viewBox="0 0 5.1 3.9"><path d="M0 0l2.55 2.9 l2.55 -2.9" fill="none" stroke="#f0f0f0" stroke-width="1.6" stroke-linecap="round" stroke-linejoin="round"/></svg>
<svg class="a" style="left:1348px;top:167.1px;" width="16.2" height="14" viewBox="0 0 16.2 14"><rect x="0.500" y="0.500" width="15" height="12.800" fill="none" stroke="#dcdcdc" stroke-width="1"/><path d="M0.500 2.600h15" stroke="#dcdcdc" stroke-width="1"/><path d="M8 4.500v6.500M5 8.300l3 3l3-3" fill="none" stroke="#3a96dd" stroke-width="1.200"/></svg>
<svg class="a" style="left:1370.35px;top:172.95px;" width="5.1" height="3.9" viewBox="0 0 5.1 3.9"><path d="M0 0l2.55 2.9 l2.55 -2.9" fill="none" stroke="#f0f0f0" stroke-width="1.6" stroke-linecap="round" stroke-linejoin="round"/></svg>
<svg class="a" style="left:1350px;top:190px;" width="12.4" height="12.2" viewBox="0 0 12.4 12.2"><path d="M0.500 0.500l11.400 11.200M11.900 0.500l-11.400 11.200" stroke="#e0443c" stroke-width="1.100"/></svg>
<svg class="a" style="left:1370.35px;top:194.55px;" width="5.1" height="3.9" viewBox="0 0 5.1 3.9"><path d="M0 0l2.55 2.9 l2.55 -2.9" fill="none" stroke="#f0f0f0" stroke-width="1.6" stroke-linecap="round" stroke-linejoin="round"/></svg>
<svg class="a tx" style="left:1384.70px;top:158.70px;" width="1" height="1"><text style="font-size:15.8px;fill:#3a96dd;">A</text></svg>
<svg class="a tx" style="left:1384.70px;top:172.90px;" width="1" height="1"><text style="font-size:15.8px;fill:#dcdcdc;">Z</text></svg>
<svg class="a" style="left:1397px;top:153.4px;" width="16.2" height="16" viewBox="0 0 16.2 16"><path d="M0.500 0.500h15v1.500l-5.500 6v7.300h-4v-7.300l-5.500-6z" fill="none" stroke="#dcdcdc" stroke-width="1.100" stroke-linejoin="round"/></svg>
<svg class="a" style="left:1420.55px;top:158.85px;" width="5.1" height="3.9" viewBox="0 0 5.1 3.9"><path d="M0 0l2.55 2.9 l2.55 -2.9" fill="none" stroke="#f0f0f0" stroke-width="1.6" stroke-linecap="round" stroke-linejoin="round"/></svg>
<svg class="a tx" style="left:1388.00px;top:189.80px;" width="1" height="1"><text style="font-size:10.6px;fill:#f0f0f0;letter-spacing:0.374px;stroke:#f0f0f0;stroke-width:0.35px;">Sort &amp;</text></svg>
<svg class="a tx" style="left:1391.40px;top:201.90px;" width="1" height="1"><text style="font-size:10.6px;fill:#f0f0f0;letter-spacing:0.207px;stroke:#f0f0f0;stroke-width:0.35px;">Filter</text></svg>
<svg class="a" style="left:1434px;top:145.5px;" width="30" height="30" viewBox="0 0 30 30"><circle cx="18.400" cy="10.900" r="10.200" fill="none" stroke="#dcdcdc" stroke-width="1.100"/><path d="M10.800 18.500l-10.300 10.300" stroke="#dcdcdc" stroke-width="1.200"/></svg>
<svg class="a" style="left:1470.35px;top:158.85px;" width="5.1" height="3.9" viewBox="0 0 5.1 3.9"><path d="M0 0l2.55 2.9 l2.55 -2.9" fill="none" stroke="#f0f0f0" stroke-width="1.6" stroke-linecap="round" stroke-linejoin="round"/></svg>
<svg class="a tx" style="left:1438.20px;top:189.80px;" width="1" height="1"><text style="font-size:10.6px;fill:#f0f0f0;letter-spacing:0.227px;stroke:#f0f0f0;stroke-width:0.35px;">Find &amp;</text></svg>
<svg class="a tx" style="left:1438.20px;top:201.90px;" width="1" height="1"><text style="font-size:10.6px;fill:#f0f0f0;letter-spacing:0.357px;stroke:#f0f0f0;stroke-width:0.35px;">Select</text></svg>
<div class="a" style="left:1488.9px;top:141.3px;width:1.2px;height:61.4px;background:#505050;"></div>
<svg class="a" style="left:1506.5px;top:145.5px;" width="23" height="29.5" viewBox="0 0 23 29.5"><path d="M9.500 0.800h11l-6.600 11.300h8.400l-16.900 16.400h-3.100l6.800-11.100h-8.400z" fill="#0c63c0" stroke="#55a8ee" stroke-width="0.900" stroke-linejoin="round"/></svg>
<svg class="a tx" style="left:1504.60px;top:189.80px;" width="1" height="1"><text style="font-size:10.6px;fill:#f0f0f0;letter-spacing:-0.026px;stroke:#f0f0f0;stroke-width:0.35px;">Ideas</text></svg>
<div class="a" style="left:1545.9px;top:141.3px;width:1.2px;height:61.4px;background:#505050;"></div>
<svg class="a" style="left:1567px;top:143px;" width="30" height="32" viewBox="0 0 30 32"><path d="M12.6 3h-11.400v27.800h20.700v-12.800" fill="none" stroke="#31628c" stroke-width="1.100"/><g transform="translate(11.8 17.8) rotate(43)"><rect x="-7" y="-2.500" width="14" height="5" fill="#2b2b2b" stroke="#31628c" stroke-width="1"/><rect x="-5" y="-0.700" width="10" height="1.400" fill="none" stroke="#31628c" stroke-width="0.700"/></g><g transform="translate(20 8.9) rotate(43)"><rect x="-7.600" y="-2.650" width="15.200" height="5.300" fill="#2b2b2b" stroke="#31628c" stroke-width="1"/><rect x="-7.600" y="0" width="15.200" height="2.650" fill="#31628c"/></g><g transform="translate(24.2 4.9) rotate(43)"><rect x="-3.500" y="-2" width="7" height="4" fill="none" stroke="#31628c" stroke-width="1"/></g></svg>
<svg class="a" style="left:1600.55px;top:158.85px;" width="5.1" height="3.9" viewBox="0 0 5.1 3.9"><path d="M0 0l2.55 2.9 l2.55 -2.9" fill="none" stroke="#9a9a9a" stroke-width="1.6" stroke-linecap="round" stroke-linejoin="round"/></svg>
<svg class="a tx" style="left:1559.00px;top:189.80px;" width="1" height="1"><text style="font-size:10.6px;fill:#8c8c8c;letter-spacing:0.362px;stroke:#8c8c8c;stroke-width:0.3px;">Sensitivity</text></svg>
</div></div>
<svg class="a" style="left:301.6px;top:101.4px;" width="12" height="17.5" viewBox="0 0 12 17.5"><path transform="scale(0.92)" d="M0.8 0.8v15l3.6-3.4 2.6 6 2.4-1-2.6-5.8h5z" fill="#000" stroke="#fff" stroke-width="1.1" stroke-linejoin="round"/></svg>
</div></body></html>
